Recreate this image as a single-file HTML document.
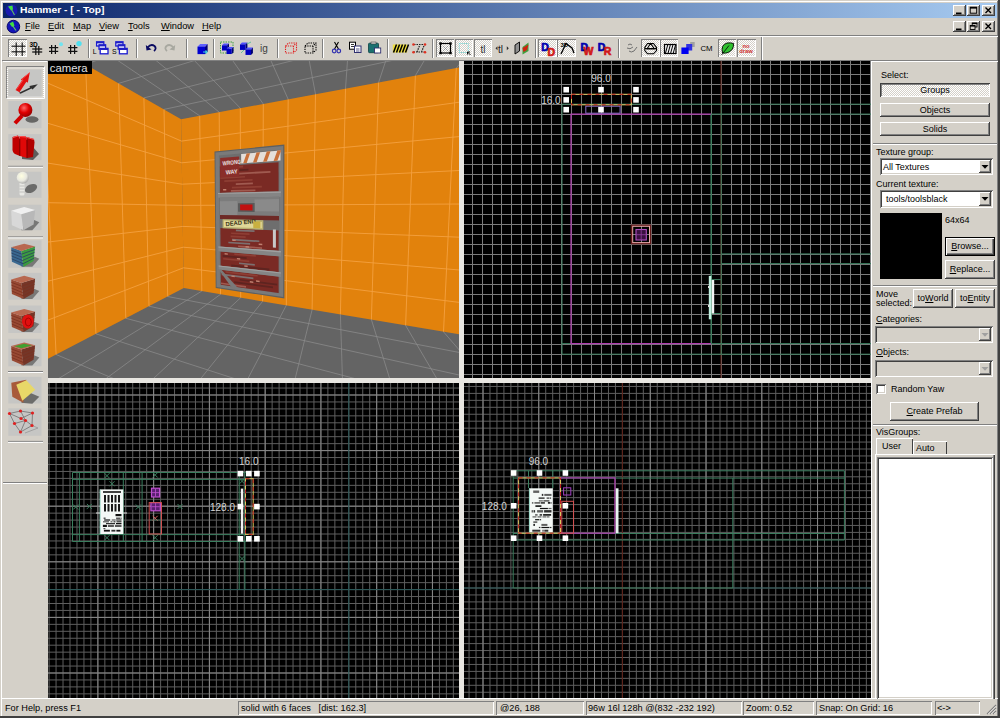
<!DOCTYPE html>
<html><head><meta charset="utf-8"><style>
html,body{margin:0;padding:0;}
body{width:1000px;height:718px;overflow:hidden;position:relative;background:#d4d0c8;font-family:"Liberation Sans",sans-serif;}
.t{position:absolute;white-space:pre;line-height:1;font-family:"Liberation Sans",sans-serif;}
svg{position:absolute;}
u{text-decoration:underline;text-underline-offset:1px;text-decoration-thickness:1px;}
</style></head><body>
<div style="position:absolute;left:0px;top:0px;width:1000px;height:718px;background:#d4d0c8;"></div><div style="position:absolute;left:1px;top:1px;width:998px;height:1px;background:#fff;"></div><div style="position:absolute;left:1px;top:1px;width:1px;height:716px;background:#fff;"></div><div style="position:absolute;left:998px;top:0px;width:2px;height:718px;background:#404040;"></div><div style="position:absolute;left:997px;top:1px;width:1px;height:716px;background:#808080;"></div><div style="position:absolute;left:0px;top:716px;width:1000px;height:2px;background:#404040;"></div><div style="position:absolute;left:3px;top:3px;width:994px;height:15px;background:linear-gradient(to right,#0a246a,#a6caf0);"></div><div class="t" style="left:20px;top:6.2px;font-size:8.8px;color:#fff;font-weight:bold;transform:scaleX(1.17);transform-origin:0 0;">Hammer - [ - Top]</div><div style="position:absolute;left:953px;top:5px;width:13px;height:11px;background:#d4d0c8;box-shadow: inset -1px -1px #404040, inset 1px 1px #fff, inset -2px -2px #808080;"></div><div style="position:absolute;left:967px;top:5px;width:13px;height:11px;background:#d4d0c8;box-shadow: inset -1px -1px #404040, inset 1px 1px #fff, inset -2px -2px #808080;"></div><div style="position:absolute;left:982px;top:5px;width:13px;height:11px;background:#d4d0c8;box-shadow: inset -1px -1px #404040, inset 1px 1px #fff, inset -2px -2px #808080;"></div><div class="t" style="left:25px;top:22px;font-size:9.3px;color:#000;font-weight:normal;"><u>F</u>ile</div><div class="t" style="left:48px;top:22px;font-size:9.3px;color:#000;font-weight:normal;"><u>E</u>dit</div><div class="t" style="left:73px;top:22px;font-size:9.3px;color:#000;font-weight:normal;"><u>M</u>ap</div><div class="t" style="left:99px;top:22px;font-size:9.3px;color:#000;font-weight:normal;"><u>V</u>iew</div><div class="t" style="left:128px;top:22px;font-size:9.3px;color:#000;font-weight:normal;"><u>T</u>ools</div><div class="t" style="left:161px;top:22px;font-size:9.3px;color:#000;font-weight:normal;"><u>W</u>indow</div><div class="t" style="left:202px;top:22px;font-size:9.3px;color:#000;font-weight:normal;"><u>H</u>elp</div><div style="position:absolute;left:953px;top:21px;width:13px;height:11px;background:#d4d0c8;box-shadow: inset -1px -1px #404040, inset 1px 1px #fff, inset -2px -2px #808080;"></div><div style="position:absolute;left:967px;top:21px;width:13px;height:11px;background:#d4d0c8;box-shadow: inset -1px -1px #404040, inset 1px 1px #fff, inset -2px -2px #808080;"></div><div style="position:absolute;left:982px;top:21px;width:13px;height:11px;background:#d4d0c8;box-shadow: inset -1px -1px #404040, inset 1px 1px #fff, inset -2px -2px #808080;"></div><div style="position:absolute;left:3px;top:482px;width:44px;height:1px;background:#808080;"></div><div style="position:absolute;left:3px;top:483px;width:44px;height:1px;background:#fff;"></div><div style="position:absolute;left:2px;top:35px;width:996px;height:1px;background:#808080;"></div><div style="position:absolute;left:2px;top:36px;width:996px;height:1px;background:#fff;"></div><div style="position:absolute;left:2px;top:60px;width:996px;height:1px;background:#808080;"></div><div style="position:absolute;left:761px;top:37px;width:1px;height:23px;background:#808080;"></div><div style="position:absolute;left:762px;top:37px;width:1px;height:23px;background:#fff;"></div><div style="position:absolute;left:2px;top:698px;width:996px;height:1px;background:#fff;"></div><div style="position:absolute;left:238px;top:701px;width:256px;height:14px;background:#d4d0c8;box-shadow: inset 1px 1px #808080, inset -1px -1px #fff;"></div><div style="position:absolute;left:496px;top:701px;width:88px;height:14px;background:#d4d0c8;box-shadow: inset 1px 1px #808080, inset -1px -1px #fff;"></div><div style="position:absolute;left:586px;top:701px;width:156px;height:14px;background:#d4d0c8;box-shadow: inset 1px 1px #808080, inset -1px -1px #fff;"></div><div style="position:absolute;left:743px;top:701px;width:71px;height:14px;background:#d4d0c8;box-shadow: inset 1px 1px #808080, inset -1px -1px #fff;"></div><div style="position:absolute;left:816px;top:701px;width:116px;height:14px;background:#d4d0c8;box-shadow: inset 1px 1px #808080, inset -1px -1px #fff;"></div><div style="position:absolute;left:935px;top:701px;width:45px;height:14px;background:#d4d0c8;box-shadow: inset 1px 1px #808080, inset -1px -1px #fff;"></div><div class="t" style="left:5px;top:703.5px;font-size:9.2px;color:#000;font-weight:normal;">For Help, press F1</div><div class="t" style="left:241px;top:703.5px;font-size:9.2px;color:#000;font-weight:normal;">solid with 6 faces   [dist: 162.3]</div><div class="t" style="left:500px;top:703.5px;font-size:9.2px;color:#000;font-weight:normal;">@26, 188</div><div class="t" style="left:588px;top:703.5px;font-size:9.2px;color:#000;font-weight:normal;">96w 16l 128h @(832 -232 192)</div><div class="t" style="left:746px;top:703.5px;font-size:9.2px;color:#000;font-weight:normal;">Zoom: 0.52</div><div class="t" style="left:819px;top:703.5px;font-size:9.2px;color:#000;font-weight:normal;">Snap: On Grid: 16</div><div class="t" style="left:937px;top:703.5px;font-size:9.2px;color:#000;font-weight:normal;">&lt;-&gt;</div><div style="position:absolute;left:3px;top:61px;width:44px;height:1px;background:#fff;"></div><div style="position:absolute;left:48px;top:61px;width:411px;height:317px;background:#000;"></div><div style="position:absolute;left:464px;top:61px;width:407px;height:317px;background:#000;"></div><div style="position:absolute;left:48px;top:383px;width:411px;height:315px;background:#000;"></div><div style="position:absolute;left:464px;top:383px;width:407px;height:315px;background:#000;"></div><div style="position:absolute;left:459px;top:61px;width:5px;height:637px;background:#e8e6e1;"></div><div style="position:absolute;left:48px;top:378px;width:823px;height:5px;background:#e8e6e1;"></div><div style="position:absolute;left:871px;top:61px;width:127px;height:637px;box-shadow: inset 1px 1px #fff;"></div><div class="t" style="left:881px;top:71px;font-size:9px;color:#000;font-weight:normal;">Select:</div><div style="position:absolute;left:880px;top:83px;width:110px;height:14px;background:repeating-conic-gradient(#fff 0 25%, #d4d0c8 0 50%) 0 0/2px 2px;box-shadow: inset 1px 1px #404040, inset -1px -1px #fff, inset 2px 2px #808080;"></div><div class="t" style="left:880px;top:85.5px;font-size:9px;color:#000;font-weight:normal;width:110px;text-align:center;">Groups</div><div style="position:absolute;left:880px;top:103px;width:110px;height:14px;background:#d4d0c8;box-shadow: inset -1px -1px #404040, inset 1px 1px #fff, inset -2px -2px #808080;"></div><div class="t" style="left:880px;top:105.5px;font-size:9px;color:#000;font-weight:normal;width:110px;text-align:center;">Objects</div><div style="position:absolute;left:880px;top:122px;width:110px;height:14px;background:#d4d0c8;box-shadow: inset -1px -1px #404040, inset 1px 1px #fff, inset -2px -2px #808080;"></div><div class="t" style="left:880px;top:124.5px;font-size:9px;color:#000;font-weight:normal;width:110px;text-align:center;">Solids</div><div style="position:absolute;left:873px;top:143px;width:124px;height:1px;background:#808080;"></div><div style="position:absolute;left:873px;top:144px;width:124px;height:1px;background:#fff;"></div><div style="position:absolute;left:873px;top:285px;width:124px;height:1px;background:#808080;"></div><div style="position:absolute;left:873px;top:286px;width:124px;height:1px;background:#fff;"></div><div style="position:absolute;left:873px;top:424px;width:124px;height:1px;background:#808080;"></div><div style="position:absolute;left:873px;top:425px;width:124px;height:1px;background:#fff;"></div><div class="t" style="left:876px;top:148px;font-size:9px;color:#000;font-weight:normal;">Texture group:</div><div style="position:absolute;left:880px;top:158px;width:113px;height:17px;background:#fff;box-shadow: inset 1px 1px #808080, inset -1px -1px #fff, inset 2px 2px #404040, inset -2px -2px #d4d0c8;"></div><div class="t" style="left:883px;top:163px;font-size:9px;color:#000;font-weight:normal;">All Textures</div><div style="position:absolute;left:979px;top:160px;width:12px;height:13px;background:#d4d0c8;box-shadow: inset -1px -1px #404040, inset 1px 1px #fff, inset -2px -2px #808080;"></div><div class="t" style="left:876px;top:180px;font-size:9px;color:#000;font-weight:normal;">Current texture:</div><div style="position:absolute;left:880px;top:190px;width:113px;height:18px;background:#fff;box-shadow: inset 1px 1px #808080, inset -1px -1px #fff, inset 2px 2px #404040, inset -2px -2px #d4d0c8;"></div><div class="t" style="left:886px;top:195px;font-size:9px;color:#000;font-weight:normal;">tools/toolsblack</div><div style="position:absolute;left:979px;top:192px;width:12px;height:14px;background:#d4d0c8;box-shadow: inset -1px -1px #404040, inset 1px 1px #fff, inset -2px -2px #808080;"></div><div style="position:absolute;left:880px;top:213px;width:62px;height:66px;background:#000;"></div><div class="t" style="left:945px;top:216px;font-size:9px;color:#000;font-weight:normal;">64x64</div><div style="position:absolute;left:945px;top:237px;width:50px;height:19px;background:#d4d0c8;box-shadow: inset 1px 1px #000, inset -1px -1px #000, inset 2px 2px #fff, inset -2px -2px #404040, inset -3px -3px #808080;"></div><div class="t" style="left:945px;top:242px;font-size:9px;color:#000;font-weight:normal;width:50px;text-align:center;"><u>B</u>rowse...</div><div style="position:absolute;left:945px;top:260px;width:50px;height:19px;background:#d4d0c8;box-shadow: inset -1px -1px #404040, inset 1px 1px #fff, inset -2px -2px #808080;"></div><div class="t" style="left:945px;top:265px;font-size:9px;color:#000;font-weight:normal;width:50px;text-align:center;"><u>R</u>eplace...</div><div class="t" style="left:876px;top:290px;font-size:9px;color:#000;font-weight:normal;">Move</div><div class="t" style="left:876px;top:299px;font-size:9px;color:#000;font-weight:normal;">selected:</div><div style="position:absolute;left:913px;top:289px;width:40px;height:19px;background:#d4d0c8;box-shadow: inset -1px -1px #404040, inset 1px 1px #fff, inset -2px -2px #808080;"></div><div class="t" style="left:913px;top:294px;font-size:9px;color:#000;font-weight:normal;width:40px;text-align:center;">to<u>W</u>orld</div><div style="position:absolute;left:955px;top:289px;width:40px;height:19px;background:#d4d0c8;box-shadow: inset -1px -1px #404040, inset 1px 1px #fff, inset -2px -2px #808080;"></div><div class="t" style="left:955px;top:294px;font-size:9px;color:#000;font-weight:normal;width:40px;text-align:center;">to<u>E</u>ntity</div><div class="t" style="left:876px;top:315px;font-size:9px;color:#000;font-weight:normal;"><u>C</u>ategories:</div><div style="position:absolute;left:875px;top:326px;width:118px;height:17px;background:#d4d0c8;box-shadow: inset 1px 1px #808080, inset -1px -1px #fff, inset 2px 2px #404040, inset -2px -2px #d4d0c8;"></div><div style="position:absolute;left:979px;top:328px;width:12px;height:13px;background:#d4d0c8;box-shadow: inset -1px -1px #404040, inset 1px 1px #fff, inset -2px -2px #808080;"></div><div class="t" style="left:876px;top:348px;font-size:9px;color:#000;font-weight:normal;"><u>O</u>bjects:</div><div style="position:absolute;left:875px;top:360px;width:118px;height:17px;background:#d4d0c8;box-shadow: inset 1px 1px #808080, inset -1px -1px #fff, inset 2px 2px #404040, inset -2px -2px #d4d0c8;"></div><div style="position:absolute;left:979px;top:362px;width:12px;height:13px;background:#d4d0c8;box-shadow: inset -1px -1px #404040, inset 1px 1px #fff, inset -2px -2px #808080;"></div><div style="position:absolute;left:876px;top:384px;width:10px;height:10px;background:#fff;box-shadow: inset 1px 1px #808080, inset -1px -1px #fff, inset 2px 2px #404040, inset -2px -2px #d4d0c8;"></div><div class="t" style="left:891px;top:385px;font-size:9px;color:#000;font-weight:normal;">Random Yaw</div><div style="position:absolute;left:890px;top:402px;width:89px;height:19px;background:#d4d0c8;box-shadow: inset -1px -1px #404040, inset 1px 1px #fff, inset -2px -2px #808080;"></div><div class="t" style="left:890px;top:407px;font-size:9px;color:#000;font-weight:normal;width:89px;text-align:center;"><u>C</u>reate Prefab</div><div class="t" style="left:876px;top:428px;font-size:9px;color:#000;font-weight:normal;">VisGroups:</div><div style="position:absolute;left:876px;top:438px;width:37px;height:17px;background:#d4d0c8;box-shadow: inset 1px 1px #fff, inset -1px 0 #404040;"></div><div class="t" style="left:882px;top:442px;font-size:9px;color:#000;font-weight:normal;">User</div><div style="position:absolute;left:913px;top:441px;width:34px;height:14px;background:#d4d0c8;box-shadow: inset 1px 1px #fff, inset -1px 0 #404040;"></div><div class="t" style="left:916px;top:444px;font-size:9px;color:#000;font-weight:normal;">Auto</div><div style="position:absolute;left:875px;top:454px;width:120px;height:245px;box-shadow: inset 1px 1px #fff, inset -1px 0 #404040, inset -2px 0 #808080;"></div><div style="position:absolute;left:877px;top:457px;width:116px;height:242px;background:#fff;box-shadow: inset 1px 1px #808080, inset -1px -1px #fff, inset 2px 2px #404040, inset -2px -2px #d4d0c8;"></div><svg style="left:0px;top:0px" width="1000" height="36" viewBox="0 0 1000 36"><rect x="956" y="12.5" width="5.5" height="1.8" fill="#000"/><rect x="970.2" y="7.2" width="6.5" height="6" fill="none" stroke="#000" stroke-width="1"/><rect x="970" y="7" width="7" height="1.6" fill="#000"/><path d="M985.5,7.5 L991,13 M991,7.5 L985.5,13" stroke="#000" stroke-width="1.4"/><rect x="956" y="28.5" width="5.5" height="1.8" fill="#000"/><rect x="972.2" y="23" width="4.8" height="4" fill="none" stroke="#000" stroke-width="0.9"/><rect x="972" y="22.8" width="5.2" height="1.3" fill="#000"/><rect x="970.2" y="25.5" width="4.8" height="4" fill="#d4d0c8" stroke="#000" stroke-width="0.9"/><rect x="970" y="25.3" width="5.2" height="1.3" fill="#000"/><path d="M985.5,23.5 L991,29 M991,23.5 L985.5,29" stroke="#000" stroke-width="1.4"/><circle cx="11.5" cy="10.5" r="6" fill="#1a1ab0"/><path d="M8,6.5 L12.5,5.5 L13,9.5 L11,10.5 Z" fill="#40e040"/><path d="M11.5,9.5 L14.5,15" stroke="#60c060" stroke-width="1.1"/><circle cx="13.4" cy="26.6" r="6.3" fill="#1414b8" stroke="#000060" stroke-width="0.9"/><path d="M9.5,23.5 L13,21.5 L14.5,25.5 L12,27 Z" fill="#40e040"/><path d="M12.5,25.5 L16,30.5" stroke="#60d060" stroke-width="1.1"/></svg><svg style="left:980px;top:700px" width="20" height="18" viewBox="980 700 20 18"><path d="M996,705 L987,714" stroke="#808080" stroke-width="1.1"/><path d="M996,706.2 L988.2,714" stroke="#fff" stroke-width="0.6"/><path d="M996,708 L990,714" stroke="#808080" stroke-width="1.1"/><path d="M996,709.2 L991.2,714" stroke="#fff" stroke-width="0.6"/><path d="M996,711 L993,714" stroke="#808080" stroke-width="1.1"/><path d="M996,712.2 L994.2,714" stroke="#fff" stroke-width="0.6"/></svg><svg style="left:960px;top:150px" width="40" height="240" viewBox="960 150 40 240"><path d="M981.5,165 L988.5,165 L985,168.8 Z" fill="#000"/><path d="M981.5,197 L988.5,197 L985,200.8 Z" fill="#000"/><path d="M981.5,333 L988.5,333 L985,336.8 Z" fill="#a0a0a0"/><path d="M981.5,367 L988.5,367 L985,370.8 Z" fill="#a0a0a0"/></svg><svg style="left:48px;top:61px" width="411" height="317" viewBox="48 61 411 317"><rect x="48" y="61" width="411" height="317" fill="#646464"/><polygon points="181.1,119.2 94216.0,-17387.0 -30641.1,-17533.9" fill="#646464" /><polygon points="183.8,288.1 98714.4,16840.8 -31373.0,16687.8" fill="#646464" /><polygon points="183.8,288.1 98714.4,16840.8 94216.0,-17387.0 181.1,119.2" fill="#e2820c" /><polygon points="183.8,288.1 -31373.0,16687.8 -30641.1,-17533.9 181.1,119.2" fill="#e2820c" /><line x1="201.8" y1="291.1" x2="199.7" y2="115.8" stroke="#f4a040" stroke-width="0.9"/><line x1="220.5" y1="294.3" x2="219.2" y2="112.2" stroke="#f4a040" stroke-width="0.9"/><line x1="240.7" y1="297.7" x2="240.3" y2="108.2" stroke="#f4a040" stroke-width="0.9"/><line x1="262.6" y1="301.4" x2="263.3" y2="104.0" stroke="#f4a040" stroke-width="0.9"/><line x1="286.3" y1="305.3" x2="288.2" y2="99.3" stroke="#f4a040" stroke-width="0.9"/><line x1="312.1" y1="309.7" x2="315.5" y2="94.2" stroke="#f4a040" stroke-width="0.9"/><line x1="340.4" y1="314.4" x2="345.5" y2="88.6" stroke="#f4a040" stroke-width="0.9"/><line x1="371.4" y1="319.6" x2="378.6" y2="82.5" stroke="#f4a040" stroke-width="0.9"/><line x1="405.6" y1="325.4" x2="415.4" y2="75.6" stroke="#f4a040" stroke-width="0.9"/><line x1="443.5" y1="331.8" x2="456.3" y2="68.0" stroke="#f4a040" stroke-width="0.9"/><line x1="485.7" y1="338.8" x2="502.3" y2="59.5" stroke="#f4a040" stroke-width="0.9"/><line x1="533.1" y1="346.8" x2="554.2" y2="49.8" stroke="#f4a040" stroke-width="0.9"/><line x1="586.6" y1="355.8" x2="613.4" y2="38.8" stroke="#f4a040" stroke-width="0.9"/><line x1="647.4" y1="366.0" x2="681.5" y2="26.1" stroke="#f4a040" stroke-width="0.9"/><line x1="717.3" y1="377.8" x2="760.7" y2="11.4" stroke="#f4a040" stroke-width="0.9"/><line x1="798.4" y1="391.4" x2="853.8" y2="-6.0" stroke="#f4a040" stroke-width="0.9"/><line x1="893.7" y1="407.4" x2="964.9" y2="-26.7" stroke="#f4a040" stroke-width="0.9"/><line x1="1007.1" y1="426.4" x2="1099.8" y2="-51.8" stroke="#f4a040" stroke-width="0.9"/><line x1="1144.5" y1="449.5" x2="1267.1" y2="-82.9" stroke="#f4a040" stroke-width="0.9"/><line x1="1314.3" y1="478.0" x2="1480.0" y2="-122.6" stroke="#f4a040" stroke-width="0.9"/><line x1="1529.5" y1="514.2" x2="1760.2" y2="-174.7" stroke="#f4a040" stroke-width="0.9"/><line x1="1811.3" y1="561.5" x2="2145.4" y2="-246.4" stroke="#f4a040" stroke-width="0.9"/><line x1="2195.9" y1="626.2" x2="2708.4" y2="-351.3" stroke="#f4a040" stroke-width="0.9"/><line x1="2752.6" y1="719.7" x2="3609.2" y2="-519.0" stroke="#f4a040" stroke-width="0.9"/><line x1="3629.7" y1="867.0" x2="5282.0" y2="-830.4" stroke="#f4a040" stroke-width="0.9"/><line x1="5215.8" y1="1133.5" x2="9463.7" y2="-1608.9" stroke="#f4a040" stroke-width="0.9"/><line x1="8953.9" y1="1761.5" x2="38716.9" y2="-7054.9" stroke="#f4a040" stroke-width="0.9"/><line x1="28462.8" y1="5038.9" x2="97387.7" y2="6745.9" stroke="#f4a040" stroke-width="0.9"/><line x1="181.5" y1="141.1" x2="94778.3" y2="-13108.5" stroke="#f4a040" stroke-width="0.9"/><line x1="181.5" y1="141.1" x2="-30732.6" y2="-13256.2" stroke="#f4a040" stroke-width="0.9"/><line x1="181.8" y1="162.8" x2="95340.6" y2="-8830.1" stroke="#f4a040" stroke-width="0.9"/><line x1="181.8" y1="162.8" x2="-30824.1" y2="-8978.5" stroke="#f4a040" stroke-width="0.9"/><line x1="182.2" y1="184.2" x2="95902.9" y2="-4551.6" stroke="#f4a040" stroke-width="0.9"/><line x1="182.2" y1="184.2" x2="-30915.6" y2="-4700.8" stroke="#f4a040" stroke-width="0.9"/><line x1="182.5" y1="205.4" x2="96465.2" y2="-273.1" stroke="#f4a040" stroke-width="0.9"/><line x1="182.5" y1="205.4" x2="-31007.0" y2="-423.1" stroke="#f4a040" stroke-width="0.9"/><line x1="182.8" y1="226.4" x2="97027.5" y2="4005.4" stroke="#f4a040" stroke-width="0.9"/><line x1="182.8" y1="226.4" x2="-31098.5" y2="3854.6" stroke="#f4a040" stroke-width="0.9"/><line x1="183.2" y1="247.2" x2="97589.8" y2="8283.8" stroke="#f4a040" stroke-width="0.9"/><line x1="183.2" y1="247.2" x2="-31190.0" y2="8132.3" stroke="#f4a040" stroke-width="0.9"/><line x1="183.5" y1="267.8" x2="98152.1" y2="12562.3" stroke="#f4a040" stroke-width="0.9"/><line x1="183.5" y1="267.8" x2="-31281.5" y2="12410.1" stroke="#f4a040" stroke-width="0.9"/><line x1="167.7" y1="296.5" x2="164.0" y2="109.4" stroke="#f4a040" stroke-width="0.9"/><line x1="149.0" y1="306.2" x2="143.9" y2="97.9" stroke="#f4a040" stroke-width="0.9"/><line x1="125.8" y1="318.3" x2="118.6" y2="83.4" stroke="#f4a040" stroke-width="0.9"/><line x1="95.9" y1="333.8" x2="85.6" y2="64.5" stroke="#f4a040" stroke-width="0.9"/><line x1="56.1" y1="354.5" x2="40.9" y2="38.9" stroke="#f4a040" stroke-width="0.9"/><line x1="0.7" y1="383.3" x2="-23.2" y2="2.2" stroke="#f4a040" stroke-width="0.9"/><line x1="-82.0" y1="426.3" x2="-122.6" y2="-54.7" stroke="#f4a040" stroke-width="0.9"/><line x1="-218.6" y1="497.3" x2="-297.9" y2="-155.1" stroke="#f4a040" stroke-width="0.9"/><line x1="-487.3" y1="636.9" x2="-689.3" y2="-379.3" stroke="#f4a040" stroke-width="0.9"/><line x1="-1259.5" y1="1038.2" x2="-2338.2" y2="-1323.7" stroke="#f4a040" stroke-width="0.9"/><line x1="-24895.4" y1="13321.5" x2="-31350.3" y2="15627.1" stroke="#f4a040" stroke-width="0.9"/><line x1="199.7" y1="115.8" x2="-25918.3" y2="-17528.3" stroke="#8c8c8c" stroke-width="0.75"/><line x1="201.8" y1="291.1" x2="-26650.1" y2="16693.3" stroke="#8c8c8c" stroke-width="0.75"/><line x1="219.2" y1="112.2" x2="-21332.3" y2="-17522.9" stroke="#8c8c8c" stroke-width="0.75"/><line x1="220.5" y1="294.3" x2="-22064.1" y2="16698.7" stroke="#8c8c8c" stroke-width="0.75"/><line x1="240.3" y1="108.2" x2="-16746.3" y2="-17517.5" stroke="#8c8c8c" stroke-width="0.75"/><line x1="240.7" y1="297.7" x2="-17478.1" y2="16704.1" stroke="#8c8c8c" stroke-width="0.75"/><line x1="263.3" y1="104.0" x2="-12160.3" y2="-17512.1" stroke="#8c8c8c" stroke-width="0.75"/><line x1="262.6" y1="301.4" x2="-12892.1" y2="16709.5" stroke="#8c8c8c" stroke-width="0.75"/><line x1="288.2" y1="99.3" x2="-7574.3" y2="-17506.7" stroke="#8c8c8c" stroke-width="0.75"/><line x1="286.3" y1="305.3" x2="-8306.1" y2="16714.9" stroke="#8c8c8c" stroke-width="0.75"/><line x1="315.5" y1="94.2" x2="-2988.3" y2="-17501.4" stroke="#8c8c8c" stroke-width="0.75"/><line x1="312.1" y1="309.7" x2="-3720.1" y2="16720.3" stroke="#8c8c8c" stroke-width="0.75"/><line x1="345.5" y1="88.6" x2="1597.7" y2="-17496.0" stroke="#8c8c8c" stroke-width="0.75"/><line x1="340.4" y1="314.4" x2="865.9" y2="16725.7" stroke="#8c8c8c" stroke-width="0.75"/><line x1="378.6" y1="82.5" x2="6183.7" y2="-17490.6" stroke="#8c8c8c" stroke-width="0.75"/><line x1="371.4" y1="319.6" x2="5451.9" y2="16731.1" stroke="#8c8c8c" stroke-width="0.75"/><line x1="415.4" y1="75.6" x2="10769.7" y2="-17485.2" stroke="#8c8c8c" stroke-width="0.75"/><line x1="405.6" y1="325.4" x2="10037.9" y2="16736.5" stroke="#8c8c8c" stroke-width="0.75"/><line x1="456.3" y1="68.0" x2="15355.7" y2="-17479.8" stroke="#8c8c8c" stroke-width="0.75"/><line x1="443.5" y1="331.8" x2="14623.9" y2="16741.9" stroke="#8c8c8c" stroke-width="0.75"/><line x1="502.3" y1="59.5" x2="19941.7" y2="-17474.4" stroke="#8c8c8c" stroke-width="0.75"/><line x1="485.7" y1="338.8" x2="19209.9" y2="16747.3" stroke="#8c8c8c" stroke-width="0.75"/><line x1="554.2" y1="49.8" x2="24527.7" y2="-17469.0" stroke="#8c8c8c" stroke-width="0.75"/><line x1="533.1" y1="346.8" x2="23795.9" y2="16752.7" stroke="#8c8c8c" stroke-width="0.75"/><line x1="613.4" y1="38.8" x2="29113.7" y2="-17463.6" stroke="#8c8c8c" stroke-width="0.75"/><line x1="586.6" y1="355.8" x2="28381.9" y2="16758.1" stroke="#8c8c8c" stroke-width="0.75"/><line x1="681.5" y1="26.1" x2="33699.7" y2="-17458.2" stroke="#8c8c8c" stroke-width="0.75"/><line x1="647.4" y1="366.0" x2="32967.9" y2="16763.5" stroke="#8c8c8c" stroke-width="0.75"/><line x1="760.7" y1="11.4" x2="38285.7" y2="-17452.8" stroke="#8c8c8c" stroke-width="0.75"/><line x1="717.3" y1="377.8" x2="37553.9" y2="16768.8" stroke="#8c8c8c" stroke-width="0.75"/><line x1="853.8" y1="-6.0" x2="42871.7" y2="-17447.4" stroke="#8c8c8c" stroke-width="0.75"/><line x1="798.4" y1="391.4" x2="42139.9" y2="16774.2" stroke="#8c8c8c" stroke-width="0.75"/><line x1="964.9" y1="-26.7" x2="47457.7" y2="-17442.0" stroke="#8c8c8c" stroke-width="0.75"/><line x1="893.7" y1="407.4" x2="46725.9" y2="16779.6" stroke="#8c8c8c" stroke-width="0.75"/><line x1="1099.8" y1="-51.8" x2="52043.7" y2="-17436.6" stroke="#8c8c8c" stroke-width="0.75"/><line x1="1007.1" y1="426.4" x2="51311.9" y2="16785.0" stroke="#8c8c8c" stroke-width="0.75"/><line x1="1267.1" y1="-82.9" x2="56629.7" y2="-17431.2" stroke="#8c8c8c" stroke-width="0.75"/><line x1="1144.5" y1="449.5" x2="55897.9" y2="16790.4" stroke="#8c8c8c" stroke-width="0.75"/><line x1="1480.0" y1="-122.6" x2="61215.7" y2="-17425.8" stroke="#8c8c8c" stroke-width="0.75"/><line x1="1314.3" y1="478.0" x2="60483.9" y2="16795.8" stroke="#8c8c8c" stroke-width="0.75"/><line x1="1760.2" y1="-174.7" x2="65801.7" y2="-17420.4" stroke="#8c8c8c" stroke-width="0.75"/><line x1="1529.5" y1="514.2" x2="65069.9" y2="16801.2" stroke="#8c8c8c" stroke-width="0.75"/><line x1="2145.4" y1="-246.4" x2="70387.7" y2="-17415.0" stroke="#8c8c8c" stroke-width="0.75"/><line x1="1811.3" y1="561.5" x2="69655.8" y2="16806.6" stroke="#8c8c8c" stroke-width="0.75"/><line x1="2708.4" y1="-351.3" x2="74973.7" y2="-17409.6" stroke="#8c8c8c" stroke-width="0.75"/><line x1="2195.9" y1="626.2" x2="74241.8" y2="16812.0" stroke="#8c8c8c" stroke-width="0.75"/><line x1="3609.2" y1="-519.0" x2="79559.7" y2="-17404.2" stroke="#8c8c8c" stroke-width="0.75"/><line x1="2752.6" y1="719.7" x2="78827.8" y2="16817.4" stroke="#8c8c8c" stroke-width="0.75"/><line x1="5282.0" y1="-830.4" x2="84145.7" y2="-17398.9" stroke="#8c8c8c" stroke-width="0.75"/><line x1="3629.7" y1="867.0" x2="83413.8" y2="16822.8" stroke="#8c8c8c" stroke-width="0.75"/><line x1="9463.7" y1="-1608.9" x2="88731.6" y2="-17393.5" stroke="#8c8c8c" stroke-width="0.75"/><line x1="5215.8" y1="1133.5" x2="87999.8" y2="16828.2" stroke="#8c8c8c" stroke-width="0.75"/><line x1="38716.9" y1="-7054.9" x2="93317.6" y2="-17388.1" stroke="#8c8c8c" stroke-width="0.75"/><line x1="8953.9" y1="1761.5" x2="92585.8" y2="16833.6" stroke="#8c8c8c" stroke-width="0.75"/><line x1="28462.8" y1="5038.9" x2="97171.8" y2="16839.0" stroke="#8c8c8c" stroke-width="0.75"/><line x1="164.0" y1="109.4" x2="81777.4" y2="-17401.6" stroke="#8c8c8c" stroke-width="0.75"/><line x1="167.7" y1="296.5" x2="86275.8" y2="16826.2" stroke="#8c8c8c" stroke-width="0.75"/><line x1="143.9" y1="97.9" x2="70028.7" y2="-17415.5" stroke="#8c8c8c" stroke-width="0.75"/><line x1="149.0" y1="306.2" x2="74527.2" y2="16812.3" stroke="#8c8c8c" stroke-width="0.75"/><line x1="118.6" y1="83.4" x2="58280.1" y2="-17429.3" stroke="#8c8c8c" stroke-width="0.75"/><line x1="125.8" y1="318.3" x2="62778.5" y2="16798.5" stroke="#8c8c8c" stroke-width="0.75"/><line x1="85.6" y1="64.5" x2="46531.4" y2="-17443.1" stroke="#8c8c8c" stroke-width="0.75"/><line x1="95.9" y1="333.8" x2="51029.8" y2="16784.7" stroke="#8c8c8c" stroke-width="0.75"/><line x1="40.9" y1="38.9" x2="34782.7" y2="-17456.9" stroke="#8c8c8c" stroke-width="0.75"/><line x1="56.1" y1="354.5" x2="39281.2" y2="16770.9" stroke="#8c8c8c" stroke-width="0.75"/><line x1="-23.2" y1="2.2" x2="23034.1" y2="-17470.7" stroke="#8c8c8c" stroke-width="0.75"/><line x1="0.7" y1="383.3" x2="27532.5" y2="16757.1" stroke="#8c8c8c" stroke-width="0.75"/><line x1="-122.6" y1="-54.7" x2="11285.4" y2="-17484.6" stroke="#8c8c8c" stroke-width="0.75"/><line x1="-82.0" y1="426.3" x2="15783.8" y2="16743.2" stroke="#8c8c8c" stroke-width="0.75"/><line x1="-297.9" y1="-155.1" x2="-463.3" y2="-17498.4" stroke="#8c8c8c" stroke-width="0.75"/><line x1="-218.6" y1="497.3" x2="4035.2" y2="16729.4" stroke="#8c8c8c" stroke-width="0.75"/><line x1="-689.3" y1="-379.3" x2="-12212.0" y2="-17512.2" stroke="#8c8c8c" stroke-width="0.75"/><line x1="-487.3" y1="636.9" x2="-7713.5" y2="16715.6" stroke="#8c8c8c" stroke-width="0.75"/><line x1="-2338.2" y1="-1323.7" x2="-23960.6" y2="-17526.0" stroke="#8c8c8c" stroke-width="0.75"/><line x1="-1259.5" y1="1038.2" x2="-19462.2" y2="16701.8" stroke="#8c8c8c" stroke-width="0.75"/><line x1="-24895.4" y1="13321.5" x2="-31210.8" y2="16688.0" stroke="#8c8c8c" stroke-width="0.75"/><polygon points="214.5,151.6 284.4,144.5 284.4,298.5 215.7,288.0" fill="#5e6062" /><polygon points="215.4,152.6 283.2,145.9 283.2,297.1 216.6,287.1" fill="#7a7a7a" /><polygon points="218.9,155.4 279.3,149.7 279.4,293.2 220.0,284.6" fill="#6e6e6e" /><polygon points="219.9,166.4 278.5,162.2 278.6,191.5 220.1,192.9" fill="#7a2a24" /><polygon points="225.8,166.9 243.1,165.6 243.1,167.4 225.8,168.5" fill="#8e3e34" /><polygon points="221.0,170.5 248.5,168.7 248.5,170.5 221.0,172.2" fill="#5e2420" /><polygon points="230.9,173.2 270.4,170.9 270.5,172.7 230.9,175.0" fill="#a05a50" /><polygon points="220.4,177.2 245.0,175.9 245.0,177.6 220.4,178.9" fill="#8e3e34" /><polygon points="224.3,180.3 252.5,179.0 252.5,180.7 224.3,182.0" fill="#8e3e34" /><polygon points="235.8,183.2 252.9,182.5 252.9,184.2 235.8,184.9" fill="#a05a50" /><polygon points="231.9,186.7 261.9,185.7 261.9,187.5 231.9,188.4" fill="#8e3e34" /><polygon points="230.9,190.1 255.4,189.4 255.4,191.2 230.9,191.8" fill="#a05a50" /><polygon points="223.1,189.1 226.3,189.0 226.3,190.4 223.1,190.5" fill="#c08070" /><polygon points="234.0,169.3 237.4,169.1 237.4,170.6 234.0,170.8" fill="#c08070" /><polygon points="226.2,174.3 229.4,174.1 229.4,175.5 226.2,175.7" fill="#c08070" /><polygon points="220.4,228.1 278.6,230.5 278.6,251.0 220.6,246.6" fill="#7a2a24" /><polygon points="235.9,229.5 254.5,230.3 254.5,232.0 235.9,231.2" fill="#7c7070" /><polygon points="231.1,232.4 249.5,233.3 249.5,235.0 231.1,234.1" fill="#8e3e34" /><polygon points="230.6,235.5 245.6,236.3 245.6,238.1 230.6,237.2" fill="#8e3e34" /><polygon points="232.0,238.8 259.3,240.4 259.3,242.1 232.1,240.5" fill="#7c7070" /><polygon points="228.3,241.7 250.1,243.1 250.1,244.8 228.4,243.3" fill="#7c7070" /><polygon points="238.1,245.5 262.0,247.2 262.0,248.9 238.1,247.2" fill="#a05a50" /><polygon points="258.7,243.5 262.3,243.8 262.3,245.2 258.7,245.0" fill="#c08070" /><polygon points="232.4,239.5 235.7,239.7 235.7,241.1 232.4,240.9" fill="#c08070" /><polygon points="245.5,246.1 249.0,246.3 249.0,247.8 245.6,247.5" fill="#c08070" /><polygon points="220.6,251.4 278.6,256.3 278.6,272.1 220.7,265.7" fill="#7a2a24" /><polygon points="234.3,253.2 255.8,255.0 255.8,256.7 234.3,254.9" fill="#8e3e34" /><polygon points="222.6,255.1 246.6,257.2 246.6,258.9 222.6,256.7" fill="#5e2420" /><polygon points="223.2,258.0 249.3,260.5 249.3,262.2 223.2,259.6" fill="#8e3e34" /><polygon points="239.0,262.5 254.8,264.0 254.8,265.8 239.0,264.1" fill="#7c7070" /><polygon points="231.3,264.6 269.4,268.6 269.4,270.4 231.3,266.3" fill="#5e2420" /><polygon points="236.9,257.9 240.2,258.2 240.2,259.7 236.9,259.3" fill="#c08070" /><polygon points="244.3,265.3 247.7,265.6 247.7,267.1 244.3,266.7" fill="#c08070" /><polygon points="224.6,253.1 227.8,253.4 227.8,254.7 224.6,254.5" fill="#c08070" /><polygon points="220.8,269.8 278.6,276.6 278.6,293.1 220.9,284.7" fill="#7a2a24" /><polygon points="225.5,271.1 257.6,274.9 257.7,276.6 225.6,272.7" fill="#8e3e34" /><polygon points="221.6,273.6 253.4,277.5 253.4,279.3 221.6,275.2" fill="#7c7070" /><polygon points="239.7,278.9 277.2,283.8 277.2,285.6 239.7,280.6" fill="#5e2420" /><polygon points="234.2,281.3 273.0,286.5 273.0,288.3 234.2,282.9" fill="#5e2420" /><polygon points="221.0,282.4 246.0,286.0 246.0,287.7 221.0,284.1" fill="#a05a50" /><polygon points="249.8,281.0 253.3,281.4 253.3,282.9 249.8,282.4" fill="#c08070" /><polygon points="231.4,275.4 234.7,275.8 234.7,277.2 231.5,276.8" fill="#c08070" /><polygon points="256.0,280.3 259.6,280.7 259.6,282.2 256.1,281.7" fill="#c08070" /><polygon points="218.0,192.9 280.9,191.4 280.9,196.8 218.0,197.8" fill="#858585" /><polygon points="218.0,192.9 280.9,191.4 280.9,192.7 218.0,194.0" fill="#a0a0a0" /><polygon points="218.4,246.5 280.9,251.1 280.9,256.5 218.4,251.2" fill="#858585" /><polygon points="218.4,246.5 280.9,251.1 280.9,252.4 218.4,247.5" fill="#a0a0a0" /><polygon points="218.6,265.5 280.9,272.4 280.9,276.9 218.6,269.5" fill="#858585" /><polygon points="218.6,265.5 280.9,272.4 280.9,273.6 218.6,266.6" fill="#a0a0a0" /><polygon points="219.9,197.7 279.0,196.8 279.0,220.6 220.0,219.1" fill="#7c7c7c" /><polygon points="219.9,201.2 237.4,201.1 237.4,215.3 220.0,215.0" fill="#8a8a8a" /><polygon points="254.6,199.4 279.0,199.1 279.0,211.4 254.6,211.2" fill="#8a8a8a" /><polygon points="220.0,215.0 279.0,216.0 279.0,220.6 220.0,219.1" fill="#6e2a26" /><polygon points="238.0,203.2 254.6,203.1 254.6,211.9 238.1,211.8" fill="#5a5a5a" /><polygon points="240.1,204.6 252.5,204.6 252.5,210.4 240.1,210.3" fill="#c01010" /><polygon points="220.2,158.0 239.1,156.4 239.2,176.6 220.3,177.6" fill="#8a2e2a" /><g><text x="222.8" y="165.5" font-family="Liberation Sans" font-weight="bold" font-size="6.0" fill="#e8e0e0" textLength="18.4" lengthAdjust="spacingAndGlyphs" transform="rotate(-5.8 222.8 165.5)">WRONG</text><text x="226.0" y="174.5" font-family="Liberation Sans" font-weight="bold" font-size="6.0" fill="#e8e0e0" textLength="11.8" lengthAdjust="spacingAndGlyphs" transform="rotate(-5.8 226.0 174.5)">WAY</text></g><polygon points="241.1,154.0 280.5,150.4 280.5,160.5 241.2,163.4" fill="#e4dfda" /><polygon points="246.6,153.5 250.1,153.2 246.7,163.0 243.2,163.3" fill="#c8703a" /><polygon points="256.5,152.6 260.1,152.2 256.6,162.3 253.0,162.6" fill="#c8703a" /><polygon points="266.8,151.6 270.5,151.3 266.8,161.5 263.1,161.8" fill="#c8703a" /><polygon points="277.4,150.6 281.3,150.3 277.4,160.7 273.6,161.0" fill="#c8703a" /><polygon points="222.6,219.2 263.3,220.2 263.3,229.8 222.6,228.2" fill="#b8b070" /><polygon points="223.8,220.6 261.8,221.6 261.8,228.3 223.9,226.9" fill="#e0d898" /><text x="225.8" y="226.2" font-family="Liberation Sans" font-weight="bold" font-size="6.0" fill="#3a3418" textLength="30.3" lengthAdjust="spacingAndGlyphs" transform="rotate(-5.8 225.8 226.2)">DEAD END</text><polygon points="253.2,221.4 260.4,221.6 260.4,228.3 253.3,228.0" fill="#c8b040" /><polygon points="272.9,229.5 275.9,229.6 275.9,247.8 272.9,247.5" fill="#c8c8c8" /><polygon points="218.6,269.5 221.7,269.9 237.9,287.9 231.3,286.9" fill="#7a7a7a" /><rect x="48" y="61" width="44" height="13" fill="#000"/><text x="49.8" y="72" font-family="Liberation Sans" font-size="11.3" fill="#e0e0e0">camera</text></svg><svg style="left:464px;top:61px" width="407" height="317" viewBox="464 61 407 317"><rect x="464" y="61" width="407" height="317" fill="#000"/><line x1="472.50" y1="61" x2="472.50" y2="378" stroke="#7c7c7c" stroke-width="1.0" /><line x1="482.50" y1="61" x2="482.50" y2="378" stroke="#7c7c7c" stroke-width="1.0" /><line x1="492.50" y1="61" x2="492.50" y2="378" stroke="#7c7c7c" stroke-width="1.0" /><line x1="501.50" y1="61" x2="501.50" y2="378" stroke="#7c7c7c" stroke-width="1.0" /><line x1="511.50" y1="61" x2="511.50" y2="378" stroke="#7c7c7c" stroke-width="1.0" /><line x1="521.50" y1="61" x2="521.50" y2="378" stroke="#7c7c7c" stroke-width="1.0" /><line x1="531.50" y1="61" x2="531.50" y2="378" stroke="#7c7c7c" stroke-width="1.0" /><line x1="541.50" y1="61" x2="541.50" y2="378" stroke="#7c7c7c" stroke-width="1.0" /><line x1="551.50" y1="61" x2="551.50" y2="378" stroke="#7c7c7c" stroke-width="1.0" /><line x1="561.50" y1="61" x2="561.50" y2="378" stroke="#7c7c7c" stroke-width="1.0" /><line x1="571.50" y1="61" x2="571.50" y2="378" stroke="#7c7c7c" stroke-width="1.0" /><line x1="581.50" y1="61" x2="581.50" y2="378" stroke="#7c7c7c" stroke-width="1.0" /><line x1="591.50" y1="61" x2="591.50" y2="378" stroke="#7c7c7c" stroke-width="1.0" /><line x1="601.50" y1="61" x2="601.50" y2="378" stroke="#7c7c7c" stroke-width="1.0" /><line x1="611.50" y1="61" x2="611.50" y2="378" stroke="#7c7c7c" stroke-width="1.0" /><line x1="621.50" y1="61" x2="621.50" y2="378" stroke="#7c7c7c" stroke-width="1.0" /><line x1="631.50" y1="61" x2="631.50" y2="378" stroke="#7c7c7c" stroke-width="1.0" /><line x1="641.50" y1="61" x2="641.50" y2="378" stroke="#7c7c7c" stroke-width="1.0" /><line x1="651.50" y1="61" x2="651.50" y2="378" stroke="#7c7c7c" stroke-width="1.0" /><line x1="661.50" y1="61" x2="661.50" y2="378" stroke="#7c7c7c" stroke-width="1.0" /><line x1="671.50" y1="61" x2="671.50" y2="378" stroke="#7c7c7c" stroke-width="1.0" /><line x1="681.50" y1="61" x2="681.50" y2="378" stroke="#7c7c7c" stroke-width="1.0" /><line x1="691.50" y1="61" x2="691.50" y2="378" stroke="#7c7c7c" stroke-width="1.0" /><line x1="701.50" y1="61" x2="701.50" y2="378" stroke="#7c7c7c" stroke-width="1.0" /><line x1="711.50" y1="61" x2="711.50" y2="378" stroke="#7c7c7c" stroke-width="1.0" /><line x1="721.50" y1="61" x2="721.50" y2="378" stroke="#7c7c7c" stroke-width="1.0" /><line x1="731.50" y1="61" x2="731.50" y2="378" stroke="#7c7c7c" stroke-width="1.0" /><line x1="741.50" y1="61" x2="741.50" y2="378" stroke="#7c7c7c" stroke-width="1.0" /><line x1="750.50" y1="61" x2="750.50" y2="378" stroke="#7c7c7c" stroke-width="1.0" /><line x1="760.50" y1="61" x2="760.50" y2="378" stroke="#7c7c7c" stroke-width="1.0" /><line x1="770.50" y1="61" x2="770.50" y2="378" stroke="#7c7c7c" stroke-width="1.0" /><line x1="780.50" y1="61" x2="780.50" y2="378" stroke="#7c7c7c" stroke-width="1.0" /><line x1="790.50" y1="61" x2="790.50" y2="378" stroke="#7c7c7c" stroke-width="1.0" /><line x1="800.50" y1="61" x2="800.50" y2="378" stroke="#7c7c7c" stroke-width="1.0" /><line x1="810.50" y1="61" x2="810.50" y2="378" stroke="#7c7c7c" stroke-width="1.0" /><line x1="820.50" y1="61" x2="820.50" y2="378" stroke="#7c7c7c" stroke-width="1.0" /><line x1="830.50" y1="61" x2="830.50" y2="378" stroke="#7c7c7c" stroke-width="1.0" /><line x1="840.50" y1="61" x2="840.50" y2="378" stroke="#7c7c7c" stroke-width="1.0" /><line x1="850.50" y1="61" x2="850.50" y2="378" stroke="#7c7c7c" stroke-width="1.0" /><line x1="860.50" y1="61" x2="860.50" y2="378" stroke="#7c7c7c" stroke-width="1.0" /><line x1="870.50" y1="61" x2="870.50" y2="378" stroke="#7c7c7c" stroke-width="1.0" /><line x1="464" y1="64.50" x2="871" y2="64.50" stroke="#7c7c7c" stroke-width="1.0" /><line x1="464" y1="74.50" x2="871" y2="74.50" stroke="#7c7c7c" stroke-width="1.0" /><line x1="464" y1="84.50" x2="871" y2="84.50" stroke="#7c7c7c" stroke-width="1.0" /><line x1="464" y1="94.50" x2="871" y2="94.50" stroke="#7c7c7c" stroke-width="1.0" /><line x1="464" y1="104.50" x2="871" y2="104.50" stroke="#7c7c7c" stroke-width="1.0" /><line x1="464" y1="114.50" x2="871" y2="114.50" stroke="#7c7c7c" stroke-width="1.0" /><line x1="464" y1="124.50" x2="871" y2="124.50" stroke="#7c7c7c" stroke-width="1.0" /><line x1="464" y1="134.50" x2="871" y2="134.50" stroke="#7c7c7c" stroke-width="1.0" /><line x1="464" y1="144.50" x2="871" y2="144.50" stroke="#7c7c7c" stroke-width="1.0" /><line x1="464" y1="154.50" x2="871" y2="154.50" stroke="#7c7c7c" stroke-width="1.0" /><line x1="464" y1="164.50" x2="871" y2="164.50" stroke="#7c7c7c" stroke-width="1.0" /><line x1="464" y1="174.50" x2="871" y2="174.50" stroke="#7c7c7c" stroke-width="1.0" /><line x1="464" y1="184.50" x2="871" y2="184.50" stroke="#7c7c7c" stroke-width="1.0" /><line x1="464" y1="194.50" x2="871" y2="194.50" stroke="#7c7c7c" stroke-width="1.0" /><line x1="464" y1="204.50" x2="871" y2="204.50" stroke="#7c7c7c" stroke-width="1.0" /><line x1="464" y1="214.50" x2="871" y2="214.50" stroke="#7c7c7c" stroke-width="1.0" /><line x1="464" y1="224.50" x2="871" y2="224.50" stroke="#7c7c7c" stroke-width="1.0" /><line x1="464" y1="234.50" x2="871" y2="234.50" stroke="#7c7c7c" stroke-width="1.0" /><line x1="464" y1="244.50" x2="871" y2="244.50" stroke="#7c7c7c" stroke-width="1.0" /><line x1="464" y1="254.50" x2="871" y2="254.50" stroke="#7c7c7c" stroke-width="1.0" /><line x1="464" y1="264.50" x2="871" y2="264.50" stroke="#7c7c7c" stroke-width="1.0" /><line x1="464" y1="274.50" x2="871" y2="274.50" stroke="#7c7c7c" stroke-width="1.0" /><line x1="464" y1="284.50" x2="871" y2="284.50" stroke="#7c7c7c" stroke-width="1.0" /><line x1="464" y1="294.50" x2="871" y2="294.50" stroke="#7c7c7c" stroke-width="1.0" /><line x1="464" y1="304.50" x2="871" y2="304.50" stroke="#7c7c7c" stroke-width="1.0" /><line x1="464" y1="314.50" x2="871" y2="314.50" stroke="#7c7c7c" stroke-width="1.0" /><line x1="464" y1="324.50" x2="871" y2="324.50" stroke="#7c7c7c" stroke-width="1.0" /><line x1="464" y1="334.50" x2="871" y2="334.50" stroke="#7c7c7c" stroke-width="1.0" /><line x1="464" y1="344.50" x2="871" y2="344.50" stroke="#7c7c7c" stroke-width="1.0" /><line x1="464" y1="354.50" x2="871" y2="354.50" stroke="#7c7c7c" stroke-width="1.0" /><line x1="464" y1="364.50" x2="871" y2="364.50" stroke="#7c7c7c" stroke-width="1.0" /><line x1="464" y1="374.50" x2="871" y2="374.50" stroke="#7c7c7c" stroke-width="1.0" /><line x1="721" y1="61" x2="721" y2="378" stroke="#5e2016" stroke-width="1.0" /><line x1="562" y1="104.2" x2="562" y2="354.2" stroke="#3a7e5e" stroke-width="1.0" /><line x1="562" y1="104.2" x2="871" y2="104.2" stroke="#3a7e5e" stroke-width="1.0" /><line x1="562" y1="343.6" x2="871" y2="343.6" stroke="#3a7e5e" stroke-width="1.0" /><line x1="562" y1="354.2" x2="871" y2="354.2" stroke="#3a7e5e" stroke-width="1.0" /><line x1="710.8" y1="114.1" x2="871" y2="114.1" stroke="#3a7e5e" stroke-width="1.0" /><line x1="711.2" y1="114.1" x2="711.2" y2="343.6" stroke="#3a7e5e" stroke-width="1.0" /><line x1="721.2" y1="104.2" x2="721.2" y2="354.2" stroke="#3a7e5e" stroke-width="1.0" /><line x1="721.2" y1="253.9" x2="871" y2="253.9" stroke="#3a7e5e" stroke-width="1.0" /><line x1="721.2" y1="263.6" x2="871" y2="263.6" stroke="#3a7e5e" stroke-width="1.0" /><path d="M711,114.1 L571,114.1 L571,343.6 L711,343.6" fill="none" stroke="#b03cb0" stroke-width="1.2"/><line x1="711.2" y1="114.1" x2="711.2" y2="343.6" stroke="#3a7e5e" stroke-width="1.0" /><rect x="585.8" y="106.2" width="34.30000000000007" height="7.0" stroke="#8c6cc8" stroke-width="1.0" fill="none" /><rect x="571.5" y="94.3" width="59.799999999999955" height="10.5" stroke="#d8c860" stroke-width="1.0" fill="none" /><rect x="571.5" y="94.3" width="59.799999999999955" height="10.5" stroke="#c02020" stroke-width="1.0" fill="none" stroke-dasharray="4 4"/><rect x="563.4000000000001" y="86.9" width="5.599999999999909" height="5.599999999999994" fill="#fff"/><rect x="563.4000000000001" y="97.10000000000001" width="5.599999999999909" height="5.599999999999994" fill="#fff"/><rect x="563.4000000000001" y="106.9" width="5.599999999999909" height="5.599999999999994" fill="#fff"/><rect x="598.2" y="86.9" width="5.599999999999909" height="5.599999999999994" fill="#fff"/><rect x="598.2" y="106.9" width="5.599999999999909" height="5.599999999999994" fill="#fff"/><rect x="633.2" y="86.9" width="5.599999999999909" height="5.599999999999994" fill="#fff"/><rect x="633.2" y="97.10000000000001" width="5.599999999999909" height="5.599999999999994" fill="#fff"/><rect x="633.2" y="106.9" width="5.599999999999909" height="5.599999999999994" fill="#fff"/><text x="601" y="82" font-family="Liberation Sans" font-size="10" fill="#d4d4d4" text-anchor="middle">96.0</text><text x="560.6" y="103.5" font-family="Liberation Sans" font-size="10" fill="#d4d4d4" text-anchor="end">16.0</text><rect x="631.5" y="225.3" width="19.0" height="18.299999999999983" stroke="#601818" stroke-width="1.5" fill="none" /><rect x="632.7" y="226.3" width="16.799999999999955" height="16.299999999999983" stroke="#e8a8a8" stroke-width="1.0" fill="none" /><rect x="636" y="229.5" width="10.299999999999955" height="10.5" stroke="#b050c0" stroke-width="1.1" fill="#3a1040" /><line x1="636" y1="234.7" x2="646.3" y2="234.7" stroke="#9040a0" stroke-width="0.8" /><line x1="641.2" y1="229.5" x2="641.2" y2="240" stroke="#9040a0" stroke-width="0.8" /><line x1="711.7" y1="279.6" x2="720.9" y2="279.6" stroke="#3a7e5e" stroke-width="1.0" /><line x1="711.7" y1="313.5" x2="720.9" y2="313.5" stroke="#3a7e5e" stroke-width="1.0" /><rect x="708.8" y="275.9" width="2.5" height="43.400000000000034" fill="#c0f0e0"/><rect x="711.7" y="280" width="2.5" height="33.5" fill="#f4f4f4"/><rect x="708" y="286" width="1.5" height="2" fill="#e0e0e0"/><rect x="708" y="305" width="1.5" height="2" fill="#e0e0e0"/></svg><svg style="left:48px;top:383px" width="411" height="315" viewBox="48 383 411 315"><rect x="48" y="383" width="411" height="315" fill="#000"/><line x1="49.09" y1="383" x2="49.09" y2="698" stroke="#5e5e5e" stroke-width="1.0" /><line x1="56.06" y1="383" x2="56.06" y2="698" stroke="#5e5e5e" stroke-width="1.0" /><line x1="63.03" y1="383" x2="63.03" y2="698" stroke="#5e5e5e" stroke-width="1.0" /><line x1="70.00" y1="383" x2="70.00" y2="698" stroke="#5e5e5e" stroke-width="1.0" /><line x1="76.97" y1="383" x2="76.97" y2="698" stroke="#5e5e5e" stroke-width="1.0" /><line x1="83.94" y1="383" x2="83.94" y2="698" stroke="#5e5e5e" stroke-width="1.0" /><line x1="90.91" y1="383" x2="90.91" y2="698" stroke="#5e5e5e" stroke-width="1.0" /><line x1="97.88" y1="383" x2="97.88" y2="698" stroke="#5e5e5e" stroke-width="1.0" /><line x1="104.85" y1="383" x2="104.85" y2="698" stroke="#5e5e5e" stroke-width="1.0" /><line x1="111.82" y1="383" x2="111.82" y2="698" stroke="#5e5e5e" stroke-width="1.0" /><line x1="118.79" y1="383" x2="118.79" y2="698" stroke="#5e5e5e" stroke-width="1.0" /><line x1="125.76" y1="383" x2="125.76" y2="698" stroke="#5e5e5e" stroke-width="1.0" /><line x1="132.73" y1="383" x2="132.73" y2="698" stroke="#5e5e5e" stroke-width="1.0" /><line x1="139.70" y1="383" x2="139.70" y2="698" stroke="#5e5e5e" stroke-width="1.0" /><line x1="146.67" y1="383" x2="146.67" y2="698" stroke="#5e5e5e" stroke-width="1.0" /><line x1="153.64" y1="383" x2="153.64" y2="698" stroke="#5e5e5e" stroke-width="1.0" /><line x1="160.61" y1="383" x2="160.61" y2="698" stroke="#5e5e5e" stroke-width="1.0" /><line x1="167.58" y1="383" x2="167.58" y2="698" stroke="#5e5e5e" stroke-width="1.0" /><line x1="174.55" y1="383" x2="174.55" y2="698" stroke="#5e5e5e" stroke-width="1.0" /><line x1="181.52" y1="383" x2="181.52" y2="698" stroke="#5e5e5e" stroke-width="1.0" /><line x1="188.49" y1="383" x2="188.49" y2="698" stroke="#5e5e5e" stroke-width="1.0" /><line x1="195.46" y1="383" x2="195.46" y2="698" stroke="#5e5e5e" stroke-width="1.0" /><line x1="202.43" y1="383" x2="202.43" y2="698" stroke="#5e5e5e" stroke-width="1.0" /><line x1="209.40" y1="383" x2="209.40" y2="698" stroke="#5e5e5e" stroke-width="1.0" /><line x1="216.37" y1="383" x2="216.37" y2="698" stroke="#5e5e5e" stroke-width="1.0" /><line x1="223.34" y1="383" x2="223.34" y2="698" stroke="#5e5e5e" stroke-width="1.0" /><line x1="230.31" y1="383" x2="230.31" y2="698" stroke="#5e5e5e" stroke-width="1.0" /><line x1="237.28" y1="383" x2="237.28" y2="698" stroke="#5e5e5e" stroke-width="1.0" /><line x1="244.25" y1="383" x2="244.25" y2="698" stroke="#5e5e5e" stroke-width="1.0" /><line x1="251.22" y1="383" x2="251.22" y2="698" stroke="#5e5e5e" stroke-width="1.0" /><line x1="258.19" y1="383" x2="258.19" y2="698" stroke="#5e5e5e" stroke-width="1.0" /><line x1="265.16" y1="383" x2="265.16" y2="698" stroke="#5e5e5e" stroke-width="1.0" /><line x1="272.13" y1="383" x2="272.13" y2="698" stroke="#5e5e5e" stroke-width="1.0" /><line x1="279.10" y1="383" x2="279.10" y2="698" stroke="#5e5e5e" stroke-width="1.0" /><line x1="286.07" y1="383" x2="286.07" y2="698" stroke="#5e5e5e" stroke-width="1.0" /><line x1="293.04" y1="383" x2="293.04" y2="698" stroke="#5e5e5e" stroke-width="1.0" /><line x1="300.01" y1="383" x2="300.01" y2="698" stroke="#5e5e5e" stroke-width="1.0" /><line x1="306.98" y1="383" x2="306.98" y2="698" stroke="#5e5e5e" stroke-width="1.0" /><line x1="313.95" y1="383" x2="313.95" y2="698" stroke="#5e5e5e" stroke-width="1.0" /><line x1="320.92" y1="383" x2="320.92" y2="698" stroke="#5e5e5e" stroke-width="1.0" /><line x1="327.89" y1="383" x2="327.89" y2="698" stroke="#5e5e5e" stroke-width="1.0" /><line x1="334.86" y1="383" x2="334.86" y2="698" stroke="#5e5e5e" stroke-width="1.0" /><line x1="341.83" y1="383" x2="341.83" y2="698" stroke="#5e5e5e" stroke-width="1.0" /><line x1="348.80" y1="383" x2="348.80" y2="698" stroke="#5e5e5e" stroke-width="1.0" /><line x1="355.77" y1="383" x2="355.77" y2="698" stroke="#5e5e5e" stroke-width="1.0" /><line x1="362.74" y1="383" x2="362.74" y2="698" stroke="#5e5e5e" stroke-width="1.0" /><line x1="369.71" y1="383" x2="369.71" y2="698" stroke="#5e5e5e" stroke-width="1.0" /><line x1="376.68" y1="383" x2="376.68" y2="698" stroke="#5e5e5e" stroke-width="1.0" /><line x1="383.65" y1="383" x2="383.65" y2="698" stroke="#5e5e5e" stroke-width="1.0" /><line x1="390.62" y1="383" x2="390.62" y2="698" stroke="#5e5e5e" stroke-width="1.0" /><line x1="397.59" y1="383" x2="397.59" y2="698" stroke="#5e5e5e" stroke-width="1.0" /><line x1="404.56" y1="383" x2="404.56" y2="698" stroke="#5e5e5e" stroke-width="1.0" /><line x1="411.53" y1="383" x2="411.53" y2="698" stroke="#5e5e5e" stroke-width="1.0" /><line x1="418.50" y1="383" x2="418.50" y2="698" stroke="#5e5e5e" stroke-width="1.0" /><line x1="425.47" y1="383" x2="425.47" y2="698" stroke="#5e5e5e" stroke-width="1.0" /><line x1="432.44" y1="383" x2="432.44" y2="698" stroke="#5e5e5e" stroke-width="1.0" /><line x1="439.41" y1="383" x2="439.41" y2="698" stroke="#5e5e5e" stroke-width="1.0" /><line x1="446.38" y1="383" x2="446.38" y2="698" stroke="#5e5e5e" stroke-width="1.0" /><line x1="453.35" y1="383" x2="453.35" y2="698" stroke="#5e5e5e" stroke-width="1.0" /><line x1="48" y1="388.05" x2="459" y2="388.05" stroke="#5e5e5e" stroke-width="1.0" /><line x1="48" y1="395.00" x2="459" y2="395.00" stroke="#5e5e5e" stroke-width="1.0" /><line x1="48" y1="401.95" x2="459" y2="401.95" stroke="#5e5e5e" stroke-width="1.0" /><line x1="48" y1="408.90" x2="459" y2="408.90" stroke="#5e5e5e" stroke-width="1.0" /><line x1="48" y1="415.85" x2="459" y2="415.85" stroke="#5e5e5e" stroke-width="1.0" /><line x1="48" y1="422.80" x2="459" y2="422.80" stroke="#5e5e5e" stroke-width="1.0" /><line x1="48" y1="429.75" x2="459" y2="429.75" stroke="#5e5e5e" stroke-width="1.0" /><line x1="48" y1="436.70" x2="459" y2="436.70" stroke="#5e5e5e" stroke-width="1.0" /><line x1="48" y1="443.65" x2="459" y2="443.65" stroke="#5e5e5e" stroke-width="1.0" /><line x1="48" y1="450.60" x2="459" y2="450.60" stroke="#5e5e5e" stroke-width="1.0" /><line x1="48" y1="457.55" x2="459" y2="457.55" stroke="#5e5e5e" stroke-width="1.0" /><line x1="48" y1="464.50" x2="459" y2="464.50" stroke="#5e5e5e" stroke-width="1.0" /><line x1="48" y1="471.45" x2="459" y2="471.45" stroke="#5e5e5e" stroke-width="1.0" /><line x1="48" y1="478.40" x2="459" y2="478.40" stroke="#5e5e5e" stroke-width="1.0" /><line x1="48" y1="485.35" x2="459" y2="485.35" stroke="#5e5e5e" stroke-width="1.0" /><line x1="48" y1="492.30" x2="459" y2="492.30" stroke="#5e5e5e" stroke-width="1.0" /><line x1="48" y1="499.25" x2="459" y2="499.25" stroke="#5e5e5e" stroke-width="1.0" /><line x1="48" y1="506.20" x2="459" y2="506.20" stroke="#5e5e5e" stroke-width="1.0" /><line x1="48" y1="513.15" x2="459" y2="513.15" stroke="#5e5e5e" stroke-width="1.0" /><line x1="48" y1="520.10" x2="459" y2="520.10" stroke="#5e5e5e" stroke-width="1.0" /><line x1="48" y1="527.05" x2="459" y2="527.05" stroke="#5e5e5e" stroke-width="1.0" /><line x1="48" y1="534.00" x2="459" y2="534.00" stroke="#5e5e5e" stroke-width="1.0" /><line x1="48" y1="540.95" x2="459" y2="540.95" stroke="#5e5e5e" stroke-width="1.0" /><line x1="48" y1="547.90" x2="459" y2="547.90" stroke="#5e5e5e" stroke-width="1.0" /><line x1="48" y1="554.85" x2="459" y2="554.85" stroke="#5e5e5e" stroke-width="1.0" /><line x1="48" y1="561.80" x2="459" y2="561.80" stroke="#5e5e5e" stroke-width="1.0" /><line x1="48" y1="568.75" x2="459" y2="568.75" stroke="#5e5e5e" stroke-width="1.0" /><line x1="48" y1="575.70" x2="459" y2="575.70" stroke="#5e5e5e" stroke-width="1.0" /><line x1="48" y1="582.65" x2="459" y2="582.65" stroke="#5e5e5e" stroke-width="1.0" /><line x1="48" y1="589.60" x2="459" y2="589.60" stroke="#5e5e5e" stroke-width="1.0" /><line x1="48" y1="596.55" x2="459" y2="596.55" stroke="#5e5e5e" stroke-width="1.0" /><line x1="48" y1="603.50" x2="459" y2="603.50" stroke="#5e5e5e" stroke-width="1.0" /><line x1="48" y1="610.45" x2="459" y2="610.45" stroke="#5e5e5e" stroke-width="1.0" /><line x1="48" y1="617.40" x2="459" y2="617.40" stroke="#5e5e5e" stroke-width="1.0" /><line x1="48" y1="624.35" x2="459" y2="624.35" stroke="#5e5e5e" stroke-width="1.0" /><line x1="48" y1="631.30" x2="459" y2="631.30" stroke="#5e5e5e" stroke-width="1.0" /><line x1="48" y1="638.25" x2="459" y2="638.25" stroke="#5e5e5e" stroke-width="1.0" /><line x1="48" y1="645.20" x2="459" y2="645.20" stroke="#5e5e5e" stroke-width="1.0" /><line x1="48" y1="652.15" x2="459" y2="652.15" stroke="#5e5e5e" stroke-width="1.0" /><line x1="48" y1="659.10" x2="459" y2="659.10" stroke="#5e5e5e" stroke-width="1.0" /><line x1="48" y1="666.05" x2="459" y2="666.05" stroke="#5e5e5e" stroke-width="1.0" /><line x1="48" y1="673.00" x2="459" y2="673.00" stroke="#5e5e5e" stroke-width="1.0" /><line x1="48" y1="679.95" x2="459" y2="679.95" stroke="#5e5e5e" stroke-width="1.0" /><line x1="48" y1="686.90" x2="459" y2="686.90" stroke="#5e5e5e" stroke-width="1.0" /><line x1="48" y1="693.85" x2="459" y2="693.85" stroke="#5e5e5e" stroke-width="1.0" /><line x1="97.88" y1="383" x2="97.88" y2="698" stroke="#888888" stroke-width="1" /><line x1="153.64" y1="383" x2="153.64" y2="698" stroke="#888888" stroke-width="1" /><line x1="209.40" y1="383" x2="209.40" y2="698" stroke="#888888" stroke-width="1" /><line x1="265.16" y1="383" x2="265.16" y2="698" stroke="#888888" stroke-width="1" /><line x1="320.92" y1="383" x2="320.92" y2="698" stroke="#888888" stroke-width="1" /><line x1="376.68" y1="383" x2="376.68" y2="698" stroke="#888888" stroke-width="1" /><line x1="432.44" y1="383" x2="432.44" y2="698" stroke="#888888" stroke-width="1" /><line x1="48" y1="395.00" x2="459" y2="395.00" stroke="#888888" stroke-width="1" /><line x1="48" y1="450.60" x2="459" y2="450.60" stroke="#888888" stroke-width="1" /><line x1="48" y1="506.20" x2="459" y2="506.20" stroke="#888888" stroke-width="1" /><line x1="48" y1="561.80" x2="459" y2="561.80" stroke="#888888" stroke-width="1" /><line x1="48" y1="617.40" x2="459" y2="617.40" stroke="#888888" stroke-width="1" /><line x1="48" y1="673.00" x2="459" y2="673.00" stroke="#888888" stroke-width="1" /><line x1="348.8" y1="383" x2="348.8" y2="698" stroke="#2a5a5a" stroke-width="1.0" /><line x1="48" y1="589.6" x2="459" y2="589.6" stroke="#2a5a5a" stroke-width="1.0" /><line x1="72.5" y1="472.5" x2="245.9" y2="472.5" stroke="#3a7e5e" stroke-width="1.0" /><line x1="72.5" y1="479.4" x2="245.9" y2="479.4" stroke="#3a7e5e" stroke-width="1.0" /><line x1="72.5" y1="534.6" x2="245.9" y2="534.6" stroke="#3a7e5e" stroke-width="1.0" /><line x1="72.5" y1="541.5" x2="245.9" y2="541.5" stroke="#3a7e5e" stroke-width="1.0" /><line x1="72.5" y1="472.5" x2="72.5" y2="541.5" stroke="#3a7e5e" stroke-width="1.0" /><line x1="79.4" y1="472.5" x2="79.4" y2="541.5" stroke="#3a7e5e" stroke-width="1.0" /><line x1="123.3" y1="472.5" x2="123.3" y2="541.5" stroke="#3a7e5e" stroke-width="1.0" /><line x1="142.1" y1="472.5" x2="142.1" y2="541.5" stroke="#3a7e5e" stroke-width="1.0" /><line x1="239.2" y1="472.5" x2="239.2" y2="589.6" stroke="#3a7e5e" stroke-width="1.0" /><line x1="244.9" y1="472.5" x2="244.9" y2="589.6" stroke="#3a7e5e" stroke-width="1.0" /><line x1="104.5" y1="473.2" x2="109.5" y2="478.2" stroke="#3a7e5e" stroke-width="1" /><line x1="104.5" y1="478.2" x2="109.5" y2="473.2" stroke="#3a7e5e" stroke-width="1" /><line x1="109.5" y1="481.3" x2="114.5" y2="486.3" stroke="#3a7e5e" stroke-width="1" /><line x1="109.5" y1="486.3" x2="114.5" y2="481.3" stroke="#3a7e5e" stroke-width="1" /><line x1="73.2" y1="504.5" x2="78.2" y2="509.5" stroke="#3a7e5e" stroke-width="1" /><line x1="73.2" y1="509.5" x2="78.2" y2="504.5" stroke="#3a7e5e" stroke-width="1" /><line x1="86.9" y1="503.9" x2="91.9" y2="508.9" stroke="#3a7e5e" stroke-width="1" /><line x1="86.9" y1="508.9" x2="91.9" y2="503.9" stroke="#3a7e5e" stroke-width="1" /><line x1="135.8" y1="504.5" x2="140.8" y2="509.5" stroke="#3a7e5e" stroke-width="1" /><line x1="135.8" y1="509.5" x2="140.8" y2="504.5" stroke="#3a7e5e" stroke-width="1" /><line x1="152.7" y1="472.5" x2="157.7" y2="477.5" stroke="#3a7e5e" stroke-width="1" /><line x1="152.7" y1="477.5" x2="157.7" y2="472.5" stroke="#3a7e5e" stroke-width="1" /><line x1="152.7" y1="535.2" x2="157.7" y2="540.2" stroke="#3a7e5e" stroke-width="1" /><line x1="152.7" y1="540.2" x2="157.7" y2="535.2" stroke="#3a7e5e" stroke-width="1" /><line x1="104.5" y1="535.2" x2="109.5" y2="540.2" stroke="#3a7e5e" stroke-width="1" /><line x1="104.5" y1="540.2" x2="109.5" y2="535.2" stroke="#3a7e5e" stroke-width="1" /><line x1="239.5" y1="478.8" x2="244.5" y2="483.8" stroke="#3a7e5e" stroke-width="1" /><line x1="239.5" y1="483.8" x2="244.5" y2="478.8" stroke="#3a7e5e" stroke-width="1" /><line x1="239.5" y1="556.1" x2="244.5" y2="561.1" stroke="#3a7e5e" stroke-width="1" /><line x1="239.5" y1="561.1" x2="244.5" y2="556.1" stroke="#3a7e5e" stroke-width="1" /><line x1="177.5" y1="504.0" x2="182.5" y2="509.0" stroke="#3a7e5e" stroke-width="1" /><line x1="177.5" y1="509.0" x2="182.5" y2="504.0" stroke="#3a7e5e" stroke-width="1" /><line x1="152.7" y1="515.8" x2="157.7" y2="520.8" stroke="#d06060" stroke-width="1" /><line x1="152.7" y1="520.8" x2="157.7" y2="515.8" stroke="#d06060" stroke-width="1" /><rect x="100.1" y="489.4" width="23.200000000000003" height="44.60000000000002" fill="#f4f8f6"/><rect x="104" y="495" width="2" height="7.5" fill="#181818"/><rect x="104" y="504" width="2" height="7.5" fill="#181818"/><rect x="107.5" y="495" width="2.0" height="7.5" fill="#181818"/><rect x="107.5" y="504" width="2.0" height="7.5" fill="#181818"/><rect x="111" y="495" width="2" height="7.5" fill="#181818"/><rect x="111" y="504" width="2" height="7.5" fill="#181818"/><rect x="114.5" y="495" width="2.0" height="7.5" fill="#181818"/><rect x="114.5" y="504" width="2.0" height="7.5" fill="#181818"/><rect x="118" y="495" width="2" height="7.5" fill="#181818"/><rect x="118" y="504" width="2" height="7.5" fill="#181818"/><rect x="103" y="491" width="18" height="2" fill="#404040"/><rect x="115.5" y="514" width="6.0" height="2.2000000000000455" fill="#101010"/><rect x="103.6" y="517.6" width="2.0" height="1.1999999999999318" fill="#303030"/><rect x="116.1" y="517.6" width="4.0" height="1.1999999999999318" fill="#303030"/><rect x="120.6" y="517.6" width="0.9000000000000057" height="1.1999999999999318" fill="#101010"/><rect x="104.2" y="519.4" width="6.0" height="1.2000000000000455" fill="#101010"/><rect x="111.7" y="519.4" width="4.0" height="1.2000000000000455" fill="#585858"/><rect x="116.2" y="519.4" width="5.299999999999997" height="1.2000000000000455" fill="#303030"/><rect x="103.0" y="521.2" width="6.0" height="1.1999999999999318" fill="#585858"/><rect x="110.5" y="521.2" width="2.0" height="1.1999999999999318" fill="#585858"/><rect x="113.5" y="521.2" width="2.0" height="1.1999999999999318" fill="#303030"/><rect x="116.5" y="521.2" width="5.0" height="1.1999999999999318" fill="#303030"/><rect x="106.0" y="523.0" width="9.0" height="1.2000000000000455" fill="#303030"/><rect x="116.0" y="523.0" width="5.5" height="1.2000000000000455" fill="#101010"/><rect x="102.9" y="524.8" width="4.0" height="2.2000000000000455" fill="#101010"/><rect x="107.9" y="524.8" width="6.0" height="2.2000000000000455" fill="#585858"/><rect x="114.9" y="524.8" width="6.599999999999994" height="2.2000000000000455" fill="#585858"/><rect x="103.4" y="528.0" width="2.0" height="1.2000000000000455" fill="#585858"/><rect x="103.9" y="529.8" width="6.0" height="1.8000000000000682" fill="#101010"/><rect x="111.4" y="529.8" width="4.0" height="1.8000000000000682" fill="#303030"/><rect x="116.4" y="529.8" width="4.0" height="1.8000000000000682" fill="#101010"/><line x1="96" y1="513" x2="100" y2="513" stroke="#ddd" stroke-width="1.0" /><line x1="123" y1="513" x2="127" y2="513" stroke="#ddd" stroke-width="1.0" /><line x1="100.1" y1="489.4" x2="100.1" y2="534" stroke="#a0e0d0" stroke-width="1.0" /><rect x="151.5" y="488.2" width="8.099999999999994" height="8.800000000000011" stroke="#c050d0" stroke-width="1.2" fill="#5a2070" /><rect x="150.9" y="502.6" width="9.400000000000006" height="8.199999999999989" stroke="#c050d0" stroke-width="1.2" fill="#5a2070" /><line x1="152" y1="492.6" x2="159" y2="492.6" stroke="#c050d0" stroke-width="0.8" /><line x1="155.5" y1="489" x2="155.5" y2="496.5" stroke="#c050d0" stroke-width="0.8" /><line x1="151.5" y1="506.7" x2="159.8" y2="506.7" stroke="#c050d0" stroke-width="0.8" /><line x1="155.6" y1="503" x2="155.6" y2="510.5" stroke="#c050d0" stroke-width="0.8" /><rect x="149.2" y="502.6" width="12.300000000000011" height="31.399999999999977" stroke="#d05050" stroke-width="1.0" fill="none" /><line x1="149.2" y1="520" x2="161.5" y2="520" stroke="#3e8864" stroke-width="0.6" /><rect x="245.5" y="478.7" width="7.699999999999989" height="55.69999999999999" stroke="#d8c860" stroke-width="1.0" fill="none" /><rect x="245.5" y="478.7" width="7.699999999999989" height="55.69999999999999" stroke="#c02020" stroke-width="1.0" fill="none" stroke-dasharray="4 4"/><rect x="240.8" y="488.6" width="2.3999999999999773" height="45.10000000000002" fill="#f0f0f0"/><rect x="237.6" y="470.8" width="5.600000000000023" height="5.600000000000023" fill="#fff"/><rect x="237.6" y="503.8" width="5.600000000000023" height="5.600000000000023" fill="#fff"/><rect x="237.6" y="536.0" width="5.600000000000023" height="5.599999999999909" fill="#fff"/><rect x="246.0" y="470.8" width="5.600000000000023" height="5.600000000000023" fill="#fff"/><rect x="246.0" y="536.0" width="5.600000000000023" height="5.599999999999909" fill="#fff"/><rect x="254.09999999999997" y="470.8" width="5.600000000000023" height="5.600000000000023" fill="#fff"/><rect x="254.09999999999997" y="503.8" width="5.600000000000023" height="5.600000000000023" fill="#fff"/><rect x="254.09999999999997" y="536.0" width="5.600000000000023" height="5.599999999999909" fill="#fff"/><text x="235" y="510.5" font-family="Liberation Sans" font-size="10" fill="#d4d4d4" text-anchor="end">128.0</text><text x="248.8" y="465" font-family="Liberation Sans" font-size="10" fill="#d4d4d4" text-anchor="middle">16.0</text></svg><svg style="left:464px;top:383px" width="407" height="315" viewBox="464 383 407 315"><rect x="464" y="383" width="407" height="315" fill="#000"/><line x1="469.06" y1="383" x2="469.06" y2="698" stroke="#5e5e5e" stroke-width="1.0" /><line x1="476.03" y1="383" x2="476.03" y2="698" stroke="#5e5e5e" stroke-width="1.0" /><line x1="483.00" y1="383" x2="483.00" y2="698" stroke="#5e5e5e" stroke-width="1.0" /><line x1="489.97" y1="383" x2="489.97" y2="698" stroke="#5e5e5e" stroke-width="1.0" /><line x1="496.94" y1="383" x2="496.94" y2="698" stroke="#5e5e5e" stroke-width="1.0" /><line x1="503.91" y1="383" x2="503.91" y2="698" stroke="#5e5e5e" stroke-width="1.0" /><line x1="510.88" y1="383" x2="510.88" y2="698" stroke="#5e5e5e" stroke-width="1.0" /><line x1="517.85" y1="383" x2="517.85" y2="698" stroke="#5e5e5e" stroke-width="1.0" /><line x1="524.82" y1="383" x2="524.82" y2="698" stroke="#5e5e5e" stroke-width="1.0" /><line x1="531.79" y1="383" x2="531.79" y2="698" stroke="#5e5e5e" stroke-width="1.0" /><line x1="538.76" y1="383" x2="538.76" y2="698" stroke="#5e5e5e" stroke-width="1.0" /><line x1="545.73" y1="383" x2="545.73" y2="698" stroke="#5e5e5e" stroke-width="1.0" /><line x1="552.70" y1="383" x2="552.70" y2="698" stroke="#5e5e5e" stroke-width="1.0" /><line x1="559.67" y1="383" x2="559.67" y2="698" stroke="#5e5e5e" stroke-width="1.0" /><line x1="566.64" y1="383" x2="566.64" y2="698" stroke="#5e5e5e" stroke-width="1.0" /><line x1="573.61" y1="383" x2="573.61" y2="698" stroke="#5e5e5e" stroke-width="1.0" /><line x1="580.58" y1="383" x2="580.58" y2="698" stroke="#5e5e5e" stroke-width="1.0" /><line x1="587.55" y1="383" x2="587.55" y2="698" stroke="#5e5e5e" stroke-width="1.0" /><line x1="594.52" y1="383" x2="594.52" y2="698" stroke="#5e5e5e" stroke-width="1.0" /><line x1="601.49" y1="383" x2="601.49" y2="698" stroke="#5e5e5e" stroke-width="1.0" /><line x1="608.46" y1="383" x2="608.46" y2="698" stroke="#5e5e5e" stroke-width="1.0" /><line x1="615.43" y1="383" x2="615.43" y2="698" stroke="#5e5e5e" stroke-width="1.0" /><line x1="622.40" y1="383" x2="622.40" y2="698" stroke="#5e5e5e" stroke-width="1.0" /><line x1="629.37" y1="383" x2="629.37" y2="698" stroke="#5e5e5e" stroke-width="1.0" /><line x1="636.34" y1="383" x2="636.34" y2="698" stroke="#5e5e5e" stroke-width="1.0" /><line x1="643.31" y1="383" x2="643.31" y2="698" stroke="#5e5e5e" stroke-width="1.0" /><line x1="650.28" y1="383" x2="650.28" y2="698" stroke="#5e5e5e" stroke-width="1.0" /><line x1="657.25" y1="383" x2="657.25" y2="698" stroke="#5e5e5e" stroke-width="1.0" /><line x1="664.22" y1="383" x2="664.22" y2="698" stroke="#5e5e5e" stroke-width="1.0" /><line x1="671.19" y1="383" x2="671.19" y2="698" stroke="#5e5e5e" stroke-width="1.0" /><line x1="678.16" y1="383" x2="678.16" y2="698" stroke="#5e5e5e" stroke-width="1.0" /><line x1="685.13" y1="383" x2="685.13" y2="698" stroke="#5e5e5e" stroke-width="1.0" /><line x1="692.10" y1="383" x2="692.10" y2="698" stroke="#5e5e5e" stroke-width="1.0" /><line x1="699.07" y1="383" x2="699.07" y2="698" stroke="#5e5e5e" stroke-width="1.0" /><line x1="706.04" y1="383" x2="706.04" y2="698" stroke="#5e5e5e" stroke-width="1.0" /><line x1="713.01" y1="383" x2="713.01" y2="698" stroke="#5e5e5e" stroke-width="1.0" /><line x1="719.98" y1="383" x2="719.98" y2="698" stroke="#5e5e5e" stroke-width="1.0" /><line x1="726.95" y1="383" x2="726.95" y2="698" stroke="#5e5e5e" stroke-width="1.0" /><line x1="733.92" y1="383" x2="733.92" y2="698" stroke="#5e5e5e" stroke-width="1.0" /><line x1="740.89" y1="383" x2="740.89" y2="698" stroke="#5e5e5e" stroke-width="1.0" /><line x1="747.86" y1="383" x2="747.86" y2="698" stroke="#5e5e5e" stroke-width="1.0" /><line x1="754.83" y1="383" x2="754.83" y2="698" stroke="#5e5e5e" stroke-width="1.0" /><line x1="761.80" y1="383" x2="761.80" y2="698" stroke="#5e5e5e" stroke-width="1.0" /><line x1="768.77" y1="383" x2="768.77" y2="698" stroke="#5e5e5e" stroke-width="1.0" /><line x1="775.74" y1="383" x2="775.74" y2="698" stroke="#5e5e5e" stroke-width="1.0" /><line x1="782.71" y1="383" x2="782.71" y2="698" stroke="#5e5e5e" stroke-width="1.0" /><line x1="789.68" y1="383" x2="789.68" y2="698" stroke="#5e5e5e" stroke-width="1.0" /><line x1="796.65" y1="383" x2="796.65" y2="698" stroke="#5e5e5e" stroke-width="1.0" /><line x1="803.62" y1="383" x2="803.62" y2="698" stroke="#5e5e5e" stroke-width="1.0" /><line x1="810.59" y1="383" x2="810.59" y2="698" stroke="#5e5e5e" stroke-width="1.0" /><line x1="817.56" y1="383" x2="817.56" y2="698" stroke="#5e5e5e" stroke-width="1.0" /><line x1="824.53" y1="383" x2="824.53" y2="698" stroke="#5e5e5e" stroke-width="1.0" /><line x1="831.50" y1="383" x2="831.50" y2="698" stroke="#5e5e5e" stroke-width="1.0" /><line x1="838.47" y1="383" x2="838.47" y2="698" stroke="#5e5e5e" stroke-width="1.0" /><line x1="845.44" y1="383" x2="845.44" y2="698" stroke="#5e5e5e" stroke-width="1.0" /><line x1="852.41" y1="383" x2="852.41" y2="698" stroke="#5e5e5e" stroke-width="1.0" /><line x1="859.38" y1="383" x2="859.38" y2="698" stroke="#5e5e5e" stroke-width="1.0" /><line x1="866.35" y1="383" x2="866.35" y2="698" stroke="#5e5e5e" stroke-width="1.0" /><line x1="464" y1="386.45" x2="871" y2="386.45" stroke="#5e5e5e" stroke-width="1.0" /><line x1="464" y1="393.40" x2="871" y2="393.40" stroke="#5e5e5e" stroke-width="1.0" /><line x1="464" y1="400.35" x2="871" y2="400.35" stroke="#5e5e5e" stroke-width="1.0" /><line x1="464" y1="407.30" x2="871" y2="407.30" stroke="#5e5e5e" stroke-width="1.0" /><line x1="464" y1="414.25" x2="871" y2="414.25" stroke="#5e5e5e" stroke-width="1.0" /><line x1="464" y1="421.20" x2="871" y2="421.20" stroke="#5e5e5e" stroke-width="1.0" /><line x1="464" y1="428.15" x2="871" y2="428.15" stroke="#5e5e5e" stroke-width="1.0" /><line x1="464" y1="435.10" x2="871" y2="435.10" stroke="#5e5e5e" stroke-width="1.0" /><line x1="464" y1="442.05" x2="871" y2="442.05" stroke="#5e5e5e" stroke-width="1.0" /><line x1="464" y1="449.00" x2="871" y2="449.00" stroke="#5e5e5e" stroke-width="1.0" /><line x1="464" y1="455.95" x2="871" y2="455.95" stroke="#5e5e5e" stroke-width="1.0" /><line x1="464" y1="462.90" x2="871" y2="462.90" stroke="#5e5e5e" stroke-width="1.0" /><line x1="464" y1="469.85" x2="871" y2="469.85" stroke="#5e5e5e" stroke-width="1.0" /><line x1="464" y1="476.80" x2="871" y2="476.80" stroke="#5e5e5e" stroke-width="1.0" /><line x1="464" y1="483.75" x2="871" y2="483.75" stroke="#5e5e5e" stroke-width="1.0" /><line x1="464" y1="490.70" x2="871" y2="490.70" stroke="#5e5e5e" stroke-width="1.0" /><line x1="464" y1="497.65" x2="871" y2="497.65" stroke="#5e5e5e" stroke-width="1.0" /><line x1="464" y1="504.60" x2="871" y2="504.60" stroke="#5e5e5e" stroke-width="1.0" /><line x1="464" y1="511.55" x2="871" y2="511.55" stroke="#5e5e5e" stroke-width="1.0" /><line x1="464" y1="518.50" x2="871" y2="518.50" stroke="#5e5e5e" stroke-width="1.0" /><line x1="464" y1="525.45" x2="871" y2="525.45" stroke="#5e5e5e" stroke-width="1.0" /><line x1="464" y1="532.40" x2="871" y2="532.40" stroke="#5e5e5e" stroke-width="1.0" /><line x1="464" y1="539.35" x2="871" y2="539.35" stroke="#5e5e5e" stroke-width="1.0" /><line x1="464" y1="546.30" x2="871" y2="546.30" stroke="#5e5e5e" stroke-width="1.0" /><line x1="464" y1="553.25" x2="871" y2="553.25" stroke="#5e5e5e" stroke-width="1.0" /><line x1="464" y1="560.20" x2="871" y2="560.20" stroke="#5e5e5e" stroke-width="1.0" /><line x1="464" y1="567.15" x2="871" y2="567.15" stroke="#5e5e5e" stroke-width="1.0" /><line x1="464" y1="574.10" x2="871" y2="574.10" stroke="#5e5e5e" stroke-width="1.0" /><line x1="464" y1="581.05" x2="871" y2="581.05" stroke="#5e5e5e" stroke-width="1.0" /><line x1="464" y1="588.00" x2="871" y2="588.00" stroke="#5e5e5e" stroke-width="1.0" /><line x1="464" y1="594.95" x2="871" y2="594.95" stroke="#5e5e5e" stroke-width="1.0" /><line x1="464" y1="601.90" x2="871" y2="601.90" stroke="#5e5e5e" stroke-width="1.0" /><line x1="464" y1="608.85" x2="871" y2="608.85" stroke="#5e5e5e" stroke-width="1.0" /><line x1="464" y1="615.80" x2="871" y2="615.80" stroke="#5e5e5e" stroke-width="1.0" /><line x1="464" y1="622.75" x2="871" y2="622.75" stroke="#5e5e5e" stroke-width="1.0" /><line x1="464" y1="629.70" x2="871" y2="629.70" stroke="#5e5e5e" stroke-width="1.0" /><line x1="464" y1="636.65" x2="871" y2="636.65" stroke="#5e5e5e" stroke-width="1.0" /><line x1="464" y1="643.60" x2="871" y2="643.60" stroke="#5e5e5e" stroke-width="1.0" /><line x1="464" y1="650.55" x2="871" y2="650.55" stroke="#5e5e5e" stroke-width="1.0" /><line x1="464" y1="657.50" x2="871" y2="657.50" stroke="#5e5e5e" stroke-width="1.0" /><line x1="464" y1="664.45" x2="871" y2="664.45" stroke="#5e5e5e" stroke-width="1.0" /><line x1="464" y1="671.40" x2="871" y2="671.40" stroke="#5e5e5e" stroke-width="1.0" /><line x1="464" y1="678.35" x2="871" y2="678.35" stroke="#5e5e5e" stroke-width="1.0" /><line x1="464" y1="685.30" x2="871" y2="685.30" stroke="#5e5e5e" stroke-width="1.0" /><line x1="464" y1="692.25" x2="871" y2="692.25" stroke="#5e5e5e" stroke-width="1.0" /><line x1="483.00" y1="383" x2="483.00" y2="698" stroke="#888888" stroke-width="1" /><line x1="538.76" y1="383" x2="538.76" y2="698" stroke="#888888" stroke-width="1" /><line x1="594.52" y1="383" x2="594.52" y2="698" stroke="#888888" stroke-width="1" /><line x1="650.28" y1="383" x2="650.28" y2="698" stroke="#888888" stroke-width="1" /><line x1="706.04" y1="383" x2="706.04" y2="698" stroke="#888888" stroke-width="1" /><line x1="761.80" y1="383" x2="761.80" y2="698" stroke="#888888" stroke-width="1" /><line x1="817.56" y1="383" x2="817.56" y2="698" stroke="#888888" stroke-width="1" /><line x1="622.4" y1="383" x2="622.4" y2="698" stroke="#5e2016" stroke-width="1.0" /><line x1="733" y1="588" x2="871" y2="588" stroke="#2a5a5a" stroke-width="1.0" /><line x1="464" y1="588" x2="513" y2="588" stroke="#2a5a5a" stroke-width="1.0" /><line x1="513.2" y1="470.8" x2="844.4" y2="470.8" stroke="#3a7e5e" stroke-width="1.0" /><line x1="513.2" y1="478.1" x2="844.4" y2="478.1" stroke="#3a7e5e" stroke-width="1.0" /><line x1="513.2" y1="533.5" x2="844.4" y2="533.5" stroke="#3a7e5e" stroke-width="1.0" /><line x1="513.2" y1="540" x2="844.4" y2="540" stroke="#3a7e5e" stroke-width="1.0" /><line x1="844.4" y1="470.8" x2="844.4" y2="540" stroke="#3a7e5e" stroke-width="1.0" /><line x1="513.2" y1="470.8" x2="513.2" y2="588" stroke="#3a7e5e" stroke-width="1.0" /><line x1="732.8" y1="478.1" x2="732.8" y2="588" stroke="#3a7e5e" stroke-width="1.0" /><line x1="513.2" y1="588" x2="732.8" y2="588" stroke="#3a7e5e" stroke-width="1.0" /><line x1="528.5" y1="470.8" x2="528.5" y2="488" stroke="#3a7e5e" stroke-width="1.0" /><line x1="552.8" y1="470.8" x2="552.8" y2="488" stroke="#3a7e5e" stroke-width="1.0" /><rect x="560.5" y="477.9" width="54.39999999999998" height="55.30000000000007" stroke="#b03cb0" stroke-width="1.2" fill="none" /><rect x="563.6" y="487.8" width="7.199999999999932" height="7.199999999999989" stroke="#a040c0" stroke-width="1.0" fill="none" /><rect x="561.8" y="501.3" width="11.700000000000045" height="31.900000000000034" stroke="#d05050" stroke-width="1.0" fill="none" /><rect x="529.4" y="488.3" width="23.399999999999977" height="44.099999999999966" fill="#f4f8f6"/><rect x="533.2" y="490.5" width="6.0" height="2.3999999999999773" fill="#606060"/><rect x="541.8" y="493.9" width="1.5" height="2.0" fill="#303030"/><rect x="544.3" y="493.9" width="7.2000000000000455" height="2.0" fill="#606060"/><rect x="538.6" y="497.5" width="6.0" height="1.1999999999999886" fill="#101010"/><rect x="546.6" y="497.5" width="2.5" height="1.1999999999999886" fill="#303030"/><rect x="549.6" y="497.5" width="1.5" height="1.1999999999999886" fill="#303030"/><rect x="538.9" y="500.3" width="4.0" height="1.1999999999999886" fill="#606060"/><rect x="543.4" y="500.3" width="6.0" height="1.1999999999999886" fill="#303030"/><rect x="531.9" y="502.1" width="1.5" height="1.599999999999966" fill="#606060"/><rect x="534.4" y="502.1" width="6.0" height="1.599999999999966" fill="#606060"/><rect x="540.9" y="502.1" width="4.0" height="1.599999999999966" fill="#303030"/><rect x="547.9" y="502.1" width="2.5" height="1.599999999999966" fill="#101010"/><rect x="550.9" y="502.1" width="0.6000000000000227" height="1.599999999999966" fill="#303030"/><rect x="535.4" y="505.3" width="6.0" height="1.599999999999966" fill="#101010"/><rect x="539.9" y="507.9" width="8.0" height="1.2000000000000455" fill="#101010"/><rect x="548.4" y="507.9" width="3.1000000000000227" height="1.2000000000000455" fill="#606060"/><rect x="531.6" y="510.1" width="1.5" height="2.3999999999999773" fill="#606060"/><rect x="533.6" y="510.1" width="1.5" height="2.3999999999999773" fill="#303030"/><rect x="537.1" y="510.1" width="6.0" height="2.3999999999999773" fill="#606060"/><rect x="544.1" y="510.1" width="7.399999999999977" height="2.3999999999999773" fill="#303030"/><rect x="535.1" y="514.1" width="2.5" height="1.6000000000000227" fill="#606060"/><rect x="539.6" y="514.1" width="2.5" height="1.6000000000000227" fill="#303030"/><rect x="543.1" y="514.1" width="8.0" height="1.6000000000000227" fill="#101010"/><rect x="532.5" y="516.3" width="4.0" height="1.2000000000000455" fill="#606060"/><rect x="537.5" y="516.3" width="4.0" height="1.2000000000000455" fill="#606060"/><rect x="542.5" y="516.3" width="4.0" height="1.2000000000000455" fill="#606060"/><rect x="547.0" y="516.3" width="2.5" height="1.2000000000000455" fill="#606060"/><rect x="535.1" y="519.1" width="4.0" height="1.1999999999999318" fill="#101010"/><rect x="539.6" y="519.1" width="1.5" height="1.1999999999999318" fill="#303030"/><rect x="533.3" y="521.3" width="4.0" height="1.6000000000000227" fill="#606060"/><rect x="533.4" y="523.9" width="1.5" height="2.0" fill="#101010"/><rect x="541.4" y="523.9" width="6.0" height="2.0" fill="#606060"/><rect x="538.9" y="526.9" width="1.5" height="1.2000000000000455" fill="#303030"/><rect x="541.4" y="526.9" width="8.0" height="1.2000000000000455" fill="#101010"/><rect x="549.9" y="526.9" width="1.5" height="1.2000000000000455" fill="#303030"/><rect x="532.3" y="529.7" width="8.0" height="2.0" fill="#303030"/><rect x="542.3" y="529.7" width="1.5" height="2.0" fill="#606060"/><rect x="544.3" y="529.7" width="4.0" height="2.0" fill="#303030"/><line x1="529.4" y1="488.3" x2="529.4" y2="532.4" stroke="#a0e0d0" stroke-width="1.0" /><rect x="518.6" y="477.9" width="41.89999999999998" height="55.30000000000007" stroke="#d8c860" stroke-width="1.0" fill="none" /><rect x="518.6" y="477.9" width="41.89999999999998" height="55.30000000000007" stroke="#c02020" stroke-width="1.0" fill="none" stroke-dasharray="4 4"/><rect x="615.8" y="488.3" width="2.7000000000000455" height="44.900000000000034" fill="#e8f4f0"/><rect x="510.90000000000003" y="470.2" width="5.599999999999966" height="5.600000000000023" fill="#fff"/><rect x="510.90000000000003" y="503.0" width="5.599999999999966" height="5.600000000000023" fill="#fff"/><rect x="510.90000000000003" y="535.4000000000001" width="5.599999999999966" height="5.599999999999909" fill="#fff"/><rect x="536.7" y="470.2" width="5.599999999999909" height="5.600000000000023" fill="#fff"/><rect x="536.7" y="535.4000000000001" width="5.599999999999909" height="5.599999999999909" fill="#fff"/><rect x="562.6" y="470.2" width="5.599999999999909" height="5.600000000000023" fill="#fff"/><rect x="562.6" y="503.0" width="5.599999999999909" height="5.600000000000023" fill="#fff"/><rect x="562.6" y="535.4000000000001" width="5.599999999999909" height="5.599999999999909" fill="#fff"/><text x="538.4" y="465" font-family="Liberation Sans" font-size="10" fill="#d4d4d4" text-anchor="middle">96.0</text><text x="506.9" y="509.5" font-family="Liberation Sans" font-size="10" fill="#d4d4d4" text-anchor="end">128.0</text></svg><div style="position:absolute;left:8px;top:39px;width:19px;height:18px;background:repeating-conic-gradient(#fff 0 25%, #d4d0c8 0 50%) 0 0/2px 2px;opacity:1;box-shadow: inset 1px 1px #808080, inset -1px -1px #fff;"></div><div style="position:absolute;left:436px;top:39px;width:18px;height:18px;background:repeating-conic-gradient(#fff 0 25%, #d4d0c8 0 50%) 0 0/2px 2px;opacity:1;box-shadow: inset 1px 1px #808080, inset -1px -1px #fff;"></div><div style="position:absolute;left:455px;top:39px;width:18px;height:18px;background:repeating-conic-gradient(#fff 0 25%, #d4d0c8 0 50%) 0 0/2px 2px;opacity:1;box-shadow: inset 1px 1px #808080, inset -1px -1px #fff;"></div><div style="position:absolute;left:474px;top:39px;width:18px;height:18px;background:repeating-conic-gradient(#fff 0 25%, #d4d0c8 0 50%) 0 0/2px 2px;opacity:1;box-shadow: inset 1px 1px #808080, inset -1px -1px #fff;"></div><div style="position:absolute;left:538px;top:39px;width:19px;height:18px;background:repeating-conic-gradient(#fff 0 25%, #d4d0c8 0 50%) 0 0/2px 2px;opacity:1;box-shadow: inset 1px 1px #808080, inset -1px -1px #fff;"></div><div style="position:absolute;left:557px;top:39px;width:19px;height:18px;background:repeating-conic-gradient(#fff 0 25%, #d4d0c8 0 50%) 0 0/2px 2px;opacity:1;box-shadow: inset 1px 1px #808080, inset -1px -1px #fff;"></div><div style="position:absolute;left:641px;top:39px;width:19px;height:18px;background:repeating-conic-gradient(#fff 0 25%, #d4d0c8 0 50%) 0 0/2px 2px;opacity:1;box-shadow: inset 1px 1px #808080, inset -1px -1px #fff;"></div><div style="position:absolute;left:660px;top:39px;width:18px;height:18px;background:repeating-conic-gradient(#fff 0 25%, #d4d0c8 0 50%) 0 0/2px 2px;opacity:1;box-shadow: inset 1px 1px #808080, inset -1px -1px #fff;"></div><div style="position:absolute;left:718px;top:39px;width:18px;height:18px;background:repeating-conic-gradient(#fff 0 25%, #d4d0c8 0 50%) 0 0/2px 2px;opacity:1;box-shadow: inset 1px 1px #808080, inset -1px -1px #fff;"></div><div style="position:absolute;left:737px;top:39px;width:19px;height:18px;background:repeating-conic-gradient(#fff 0 25%, #d4d0c8 0 50%) 0 0/2px 2px;opacity:1;box-shadow: inset 1px 1px #808080, inset -1px -1px #fff;"></div><div style="position:absolute;left:88px;top:39px;width:1px;height:19px;background:#808080;"></div><div style="position:absolute;left:89px;top:39px;width:1px;height:19px;background:#fff;"></div><div style="position:absolute;left:136px;top:39px;width:1px;height:19px;background:#808080;"></div><div style="position:absolute;left:137px;top:39px;width:1px;height:19px;background:#fff;"></div><div style="position:absolute;left:186px;top:39px;width:1px;height:19px;background:#808080;"></div><div style="position:absolute;left:187px;top:39px;width:1px;height:19px;background:#fff;"></div><div style="position:absolute;left:213px;top:39px;width:1px;height:19px;background:#808080;"></div><div style="position:absolute;left:214px;top:39px;width:1px;height:19px;background:#fff;"></div><div style="position:absolute;left:277px;top:39px;width:1px;height:19px;background:#808080;"></div><div style="position:absolute;left:278px;top:39px;width:1px;height:19px;background:#fff;"></div><div style="position:absolute;left:322px;top:39px;width:1px;height:19px;background:#808080;"></div><div style="position:absolute;left:323px;top:39px;width:1px;height:19px;background:#fff;"></div><div style="position:absolute;left:387px;top:39px;width:1px;height:19px;background:#808080;"></div><div style="position:absolute;left:388px;top:39px;width:1px;height:19px;background:#fff;"></div><div style="position:absolute;left:432px;top:39px;width:1px;height:19px;background:#808080;"></div><div style="position:absolute;left:433px;top:39px;width:1px;height:19px;background:#fff;"></div><div style="position:absolute;left:535px;top:39px;width:1px;height:19px;background:#808080;"></div><div style="position:absolute;left:536px;top:39px;width:1px;height:19px;background:#fff;"></div><div style="position:absolute;left:618px;top:39px;width:1px;height:19px;background:#808080;"></div><div style="position:absolute;left:619px;top:39px;width:1px;height:19px;background:#fff;"></div><svg style="left:0px;top:36px" width="770" height="25" viewBox="0 36 770 25"><line x1="16.2" y1="42.5" x2="16.2" y2="56" stroke="#111" stroke-width="1.1"/><line x1="22.2" y1="42.5" x2="22.2" y2="56" stroke="#111" stroke-width="1.1"/><line x1="11.5" y1="46.2" x2="25.5" y2="46.2" stroke="#111" stroke-width="1.1"/><line x1="11.5" y1="51.8" x2="25.5" y2="51.8" stroke="#111" stroke-width="1.1"/><text x="29.5" y="46.5" font-family="Liberation Sans" font-weight="bold" font-size="6.5" fill="#000">3D</text><line x1="35.8" y1="46" x2="35.8" y2="55" stroke="#111" stroke-width="1.25"/><line x1="38.8" y1="46" x2="38.8" y2="55" stroke="#111" stroke-width="1.25"/><line x1="32.2" y1="49" x2="42.2" y2="49" stroke="#111" stroke-width="1.25"/><line x1="32.2" y1="52" x2="42.2" y2="52" stroke="#111" stroke-width="1.25"/><line x1="51.6" y1="45" x2="51.6" y2="54" stroke="#111" stroke-width="1.25"/><line x1="55.4" y1="45" x2="55.4" y2="54" stroke="#111" stroke-width="1.25"/><line x1="49" y1="47.6" x2="58.2" y2="47.6" stroke="#111" stroke-width="1.25"/><line x1="49" y1="51.4" x2="58.2" y2="51.4" stroke="#111" stroke-width="1.25"/><circle cx="61" cy="44.2" r="2" fill="#70e4f0"/><line x1="70.6" y1="45" x2="70.6" y2="54" stroke="#111" stroke-width="1.25"/><line x1="74.6" y1="45" x2="74.6" y2="54" stroke="#111" stroke-width="1.25"/><line x1="68.2" y1="47.6" x2="77.4" y2="47.6" stroke="#111" stroke-width="1.25"/><line x1="68.2" y1="51.4" x2="77.4" y2="51.4" stroke="#111" stroke-width="1.25"/><circle cx="79" cy="43.6" r="2.7" fill="#50e0f0"/><rect x="96.6" y="41.8" width="7.200000000000003" height="4.200000000000003" fill="#fff" stroke="#1a1ad0" stroke-width="1.3"/><rect x="96.6" y="41.8" width="7.200000000000003" height="1.6" fill="#2020c0"/><rect x="99" y="44.8" width="6.599999999999994" height="4.400000000000006" fill="#fff" stroke="#1a1ad0" stroke-width="1.3"/><rect x="99" y="44.8" width="6.599999999999994" height="1.6" fill="#2020c0"/><rect x="100.2" y="48.4" width="7.799999999999997" height="5.399999999999999" fill="#fff" stroke="#1a1ad0" stroke-width="1.3"/><rect x="100.2" y="48.4" width="7.799999999999997" height="1.6" fill="#2020c0"/><text x="92.8" y="54" font-family="Liberation Sans" font-size="7" fill="#000">L</text><rect x="115.8" y="41.8" width="7.200000000000003" height="4.200000000000003" fill="#fff" stroke="#1a1ad0" stroke-width="1.3"/><rect x="115.8" y="41.8" width="7.200000000000003" height="1.6" fill="#2020c0"/><rect x="118.2" y="44.8" width="6.599999999999994" height="4.400000000000006" fill="#fff" stroke="#1a1ad0" stroke-width="1.3"/><rect x="118.2" y="44.8" width="6.599999999999994" height="1.6" fill="#2020c0"/><rect x="119.4" y="48.4" width="7.799999999999997" height="5.399999999999999" fill="#fff" stroke="#1a1ad0" stroke-width="1.3"/><rect x="119.4" y="48.4" width="7.799999999999997" height="1.6" fill="#2020c0"/><text x="112.0" y="54" font-family="Liberation Sans" font-size="7" fill="#000">S</text><path d="M147.5,47.5 Q151,43.5 154.5,46 Q157,48.5 154,51" fill="none" stroke="#0a0a60" stroke-width="1.8"/><path d="M145.8,45 L146.5,50.5 L151.5,49.5 Z" fill="#0a0a60"/><path d="M173.5,47.5 Q170,43.5 166.5,46 Q164,48.5 167,51" fill="none" stroke="#a8a8a0" stroke-width="1.8"/><path d="M175.2,45 L174.5,50.5 L169.5,49.5 Z" fill="#a8a8a0"/><path d="M197.5,46.625 L200.125,44 L207.625,44 L205.0,46.625 Z" fill="#6060ff"/><path d="M205.0,46.625 L207.625,44 L207.625,51.5 L205.0,54.125 Z" fill="#000080"/><rect x="197.5" y="46.625" width="7.5" height="7.5" fill="#0000d0"/><path d="M203,52 L207,52 M205.5,50.5 L207,52 L205.5,53.5" stroke="#40d0e0" stroke-width="1.2" fill="none"/><rect x="220.5" y="42" width="12.5" height="11" fill="none" stroke="#40a040" stroke-dasharray="1.5 1" stroke-width="1"/><path d="M222,45.32 L223.82,43.5 L229.01999999999998,43.5 L227.2,45.32 Z" fill="#5050ff"/><path d="M227.2,45.32 L229.01999999999998,43.5 L229.01999999999998,48.7 L227.2,50.52 Z" fill="#000070"/><rect x="222" y="45.32" width="5.2" height="5.2" fill="#0000c0"/><path d="M226.5,48.82 L228.32,47 L233.51999999999998,47 L231.7,48.82 Z" fill="#5050ff"/><path d="M231.7,48.82 L233.51999999999998,47 L233.51999999999998,52.2 L231.7,54.02 Z" fill="#000070"/><rect x="226.5" y="48.82" width="5.2" height="5.2" fill="#0000c0"/><path d="M240,44.425 L241.925,42.5 L247.425,42.5 L245.5,44.425 Z" fill="#5050ff"/><path d="M245.5,44.425 L247.425,42.5 L247.425,48.0 L245.5,49.925 Z" fill="#000070"/><rect x="240" y="44.425" width="5.5" height="5.5" fill="#0000c0"/><path d="M245.5,49.425 L247.425,47.5 L252.925,47.5 L251.0,49.425 Z" fill="#5050ff"/><path d="M251.0,49.425 L252.925,47.5 L252.925,53.0 L251.0,54.925 Z" fill="#000070"/><rect x="245.5" y="49.425" width="5.5" height="5.5" fill="#0000c0"/><path d="M247,44 L251,42 M241,53 L244,50" stroke="#60c0a0" stroke-width="1"/><text x="260" y="51.5" font-family="Liberation Sans" font-size="10" fill="#404040">ig</text><path d="M285.5,46 L288.5,43 L296.5,43 L296.5,50 L293.5,53 L285.5,53 Z M285.5,46 L293.5,46 L296.5,43 M293.5,46 L293.5,53" fill="none" stroke="#e02020" stroke-width="1.1" stroke-dasharray="1.3 1"/><path d="M305,46 L308,43 L316,43 L316,50 L313,53 L305,53 Z M305,46 L313,46 L316,43 M313,46 L313,53" fill="none" stroke="#000" stroke-width="1.1" stroke-dasharray="1.3 1"/><path d="M334.5,42 L338.5,49 M338.5,42 L334.5,49" stroke="#000" stroke-width="1.1"/><circle cx="334.2" cy="51" r="1.8" fill="none" stroke="#3030b0" stroke-width="1.2"/><circle cx="338.8" cy="51" r="1.8" fill="none" stroke="#3030b0" stroke-width="1.2"/><rect x="349.5" y="42.2" width="6" height="7" fill="#fff" stroke="#000" stroke-width="1"/><path d="M351,44.5h3M351,46.5h3" stroke="#000" stroke-width="0.8"/><rect x="354.5" y="46" width="6.5" height="6.5" fill="#fff" stroke="#303070" stroke-width="1"/><path d="M356,49h3.5M356,51h3.5" stroke="#303070" stroke-width="0.8"/><rect x="368.5" y="43.2" width="10" height="9.5" rx="1" fill="#1a7070" stroke="#0a4040" stroke-width="0.8"/><rect x="371" y="42" width="5" height="2" fill="#d0d0d0" stroke="#333" stroke-width="0.5"/><rect x="374.5" y="48" width="6.2" height="5" fill="#fff" stroke="#303070" stroke-width="0.9"/><rect x="392.8" y="44.5" width="14.4" height="8" fill="#f0e040"/><path d="M393.5,52.5 L396.5,44.5" stroke="#000" stroke-width="1.5"/><path d="M396.5,52.5 L399.5,44.5" stroke="#000" stroke-width="1.5"/><path d="M399.5,52.5 L402.5,44.5" stroke="#000" stroke-width="1.5"/><path d="M402.5,52.5 L405.5,44.5" stroke="#000" stroke-width="1.5"/><path d="M405.5,52.5 L408.5,44.5" stroke="#000" stroke-width="1.5"/><path d="M414,44.5 L425,44.5 M413.5,52 L424.5,52 M417,52 L420,44.5 M421.5,52 L424.5,44.5" stroke="#202020" stroke-width="1.2" stroke-dasharray="1.5 1"/><circle cx="413.5" cy="44.5" r="1.3" fill="#e03020"/><circle cx="425" cy="44.5" r="1.3" fill="#e03020"/><circle cx="413.5" cy="52.3" r="1.3" fill="#e03020"/><circle cx="425" cy="52.3" r="1.3" fill="#e03020"/><rect x="440.5" y="43.5" width="10" height="9.5" fill="none" stroke="#000" stroke-width="1.2"/><path d="M443,46 L448,51 M448,46 L443,51" stroke="#909090" stroke-width="0.8"/><rect x="439.3" y="42.3" width="2.4" height="2.4" fill="#000"/><rect x="449.3" y="42.3" width="2.4" height="2.4" fill="#000"/><rect x="439.3" y="51.8" width="2.4" height="2.4" fill="#000"/><rect x="449.3" y="51.8" width="2.4" height="2.4" fill="#000"/><rect x="459.3" y="43.5" width="9" height="9" fill="none" stroke="#70d8d8" stroke-width="1" stroke-dasharray="1.2 1"/><path d="M467.5,52 L470.5,55 M467.5,52 L467.5,54.5 M467.5,52 L470,52" stroke="#000" stroke-width="0.9"/><text x="480.5" y="52.5" font-family="Liberation Sans" font-size="10" fill="#303030">tl</text><text x="498" y="52.5" font-family="Liberation Sans" font-size="10" fill="#202020">tl</text><path d="M495.5,48.2 L497.5,46.2 L497.5,50.2 Z M508.8,48.2 L506.8,46.2 L506.8,50.2 Z" fill="#303030"/><path d="M515,45 L519.5,42 L519.5,51 L515,54 Z" fill="#909090" stroke="#000" stroke-width="0.9"/><path d="M522.5,47 L528.5,42.5 L528.5,51 L522.5,54.5 Z" fill="#40a040"/><path d="M522.5,48 L528.5,44.5 L527,50 L523.5,52 Z" fill="#d02010"/><text x="541.2" y="51.3" font-family="Liberation Sans" font-weight="bold" font-size="10.5" fill="#0000b0" stroke="#0000b0" stroke-width="0.7">D</text><text x="547.4" y="55.6" font-family="Liberation Sans" font-weight="bold" font-size="10.5" fill="#d01818" stroke="#d01818" stroke-width="0.7">D</text><text x="580.6" y="50.5" font-family="Liberation Sans" font-weight="bold" font-size="10.5" fill="#0000b0" stroke="#0000b0" stroke-width="0.7">D</text><text x="583.5" y="54.5" font-family="Liberation Sans" font-weight="bold" font-size="10.5" fill="#d01818" stroke="#d01818" stroke-width="0.7">W</text><text x="597.8" y="50.5" font-family="Liberation Sans" font-weight="bold" font-size="10.5" fill="#0000b0" stroke="#0000b0" stroke-width="0.7">D</text><text x="603.8" y="54.5" font-family="Liberation Sans" font-weight="bold" font-size="10.5" fill="#d01818" stroke="#d01818" stroke-width="0.7">R</text><text x="560.5" y="46.5" font-family="Liberation Sans" font-weight="bold" font-size="6" fill="#000">3D</text><path d="M561,54 L566,43.5 L572,48 L574,53" fill="none" stroke="#000" stroke-width="1.3"/><path d="M628,45 q2,-2 4,0 M627,48 q3,2 6,-1 M629,51 q2,2 5,0 L637,47" fill="none" stroke="#707070" stroke-width="1"/><path d="M647.5,43.5 L653.5,43.5 L656.5,47.5 L656.5,50.5 L653.5,53.8 L647.5,53.8 L644.8,50.5 L644.8,47.5 Z M650.5,43.5 L647,49 L654.5,49 Z M644.8,48.5 L656.5,48.5" fill="none" stroke="#000" stroke-width="1.1"/><rect x="664.5" y="44.5" width="11.5" height="9" fill="#f0f0f0" stroke="#000" stroke-width="1.2"/><path d="M665.5,53 L667.7,45" stroke="#000" stroke-width="1"/><path d="M668.1,53 L670.3000000000001,45" stroke="#000" stroke-width="1"/><path d="M670.7,53 L672.9000000000001,45" stroke="#000" stroke-width="1"/><path d="M673.3,53 L675.5,45" stroke="#000" stroke-width="1"/><rect x="690.2" y="42" width="4.5" height="5" fill="#a0a0a0"/><rect x="686.2" y="44" width="6" height="6.5" fill="#3030e0"/><rect x="681.4" y="47.5" width="7.2" height="6.5" fill="#0000f0"/><text x="700.4" y="51.2" font-family="Liberation Sans" font-size="7.8" fill="#000">CM</text><path d="M722.5,53 Q720.5,45 727,43 Q731,42.5 733.5,43.5 Q734,50 728,52.5 Q725,53.5 722.5,53 Z" fill="#30c030" stroke="#000" stroke-width="0.9"/><path d="M721.5,55 L729,45.5" stroke="#000" stroke-width="0.8"/><text x="746" y="47.5" text-anchor="middle" font-family="Liberation Sans" font-size="5.8" font-weight="bold" fill="#d03030">no</text><text x="746" y="53" text-anchor="middle" font-family="Liberation Sans" font-size="5.8" font-weight="bold" fill="#d03030">draw</text></svg><svg style="left:0px;top:62px" width="48" height="400" viewBox="0 62 48 400"><rect x="8.3" y="69.5" width="33.2" height="27.5" fill="#c6c6c4"/><rect x="8.3" y="101" width="33.2" height="27.3" fill="#c6c6c4"/><rect x="8.3" y="134.1" width="33.2" height="26.1" fill="#c6c6c4"/><rect x="8.3" y="171.7" width="33.2" height="26.1" fill="#c6c6c4"/><rect x="8.3" y="204.7" width="33.2" height="25.5" fill="#c6c6c4"/><rect x="8.3" y="240.3" width="33.2" height="27.5" fill="#c6c6c4"/><rect x="8.3" y="272.9" width="33.2" height="26.8" fill="#c6c6c4"/><rect x="8.3" y="305.5" width="33.2" height="27.5" fill="#c6c6c4"/><rect x="8.3" y="338.8" width="33.2" height="27.5" fill="#c6c6c4"/><rect x="8.3" y="376.8" width="33.2" height="26.7" fill="#c6c6c4"/><rect x="8.3" y="408.3" width="33.2" height="27.5" fill="#c6c6c4"/><path d="M6.5,98.5 L6.5,66.5 L44.5,66.5" fill="none" stroke="#808080" stroke-width="1"/><path d="M6.5,98.5 L44.5,98.5 L44.5,66.5" fill="none" stroke="#fff" stroke-width="1"/><rect x="7.5" y="68" width="36" height="29" fill="none" stroke="#fff" stroke-width="1.2" stroke-dasharray="1 1"/><rect x="8" y="165.8" width="35" height="1" fill="#808080"/><rect x="8" y="166.8" width="35" height="1" fill="#fff"/><rect x="8" y="236.4" width="35" height="1" fill="#808080"/><rect x="8" y="237.4" width="35" height="1" fill="#fff"/><rect x="8" y="371.0" width="35" height="1" fill="#808080"/><rect x="8" y="372.0" width="35" height="1" fill="#fff"/><rect x="8" y="440.9" width="35" height="1" fill="#808080"/><rect x="8" y="441.9" width="35" height="1" fill="#fff"/><path d="M19,92.8 L30,87.5 L29.5,86 L37.8,84.3 L32.5,89.5 L31.5,88.5 L20.5,93.8 Z" fill="#2e2e2e"/><path d="M15.5,90 L22,80.5 L20.8,79.5 L29.8,72.3 L27.8,82.8 L26.4,81.8 L19.5,92.2 Z" fill="#e01010"/><path d="M16.5,89.5 L23,80.2 L21.8,79.3 L29.5,73" fill="none" stroke="#ff5050" stroke-width="0.8"/><defs><radialGradient id="rb" cx="0.4" cy="0.35" r="0.7"><stop offset="0" stop-color="#ff6a6a"/><stop offset="0.5" stop-color="#e00000"/><stop offset="1" stop-color="#900000"/></radialGradient><radialGradient id="wb" cx="0.4" cy="0.35" r="0.7"><stop offset="0" stop-color="#ffffe0"/><stop offset="0.6" stop-color="#e8e8e0"/><stop offset="1" stop-color="#a0a0a0"/></radialGradient></defs><ellipse cx="32" cy="119.5" rx="6.5" ry="3.2" fill="#555" opacity="0.85"/><path d="M13.5,122 L20.5,114.5 L23.5,117 L16.5,124.5 Z" fill="#d00000"/><circle cx="25.4" cy="110" r="7" fill="url(#rb)"/><polygon points="22,152 33,147 39,154 33,160 22,159" fill="#4a4a4a" opacity="0.85"/><path d="M12.5,137 L18,135.5 L20,139 L20,156 L15,154 Q12,152 12.5,148 Z" fill="#c00000"/><path d="M19.5,136 L26,136.5 L27,140 L27,158 L20,156 Z" fill="#e00808"/><path d="M26.5,137 L34,139 L34.5,142.5 L33,157 L27,158 Z" fill="#b00000"/><path d="M13,137.5 L18,136 M20,136.5 L26,137 M27,137.5 L34,139.5" stroke="#ff5050" stroke-width="1"/><path d="M19.8,139 L19.8,156 M27,140 L27,158" stroke="#700000" stroke-width="0.9"/><ellipse cx="31" cy="188.5" rx="6.5" ry="4" transform="rotate(-25 31 188.5)" fill="#5a5a5a" opacity="0.85"/><rect x="19.5" y="182" width="5" height="13.5" rx="1.5" fill="#e8e8e4"/><path d="M19.5,186h5M19.5,189h5M19.5,192h5" stroke="#b0b0b0" stroke-width="0.7"/><circle cx="22.7" cy="177.8" r="6" fill="url(#wb)"/><polygon points="25.3,216.2 39.3,222.2 32.3,230.2 21.3,230.2" fill="#6a6a6a" opacity="0.85"/><polygon points="11.2,210.7 21.3,214.3 23.5,230.3 11.9,225.2" fill="#d8d8d8"/><polygon points="21.3,214.3 35.1,210.0 33.6,224.5 23.5,230.3" fill="#b8b8b8"/><polygon points="11.2,210.7 24.2,207.1 35.1,210.0 21.3,214.3" fill="#f0f0f0"/><polygon points="25.3,252.8 39.3,258.8 32.3,266.8 21.3,266.8" fill="#6a6a6a" opacity="0.85"/><polygon points="11.2,247.3 21.3,250.9 23.5,266.9 11.9,261.8" fill="#3a6890"/><polygon points="21.3,250.9 35.1,246.6 33.6,261.1 23.5,266.9" fill="#3c9a40"/><polygon points="11.2,247.3 24.2,243.7 35.1,246.6 21.3,250.9" fill="#b86850"/><line x1="11.3" y1="250.2" x2="21.7" y2="254.1" stroke="#2a4060" stroke-width="0.8"/><line x1="21.7" y1="254.1" x2="34.8" y2="249.5" stroke="#2a4060" stroke-width="0.8"/><line x1="11.5" y1="253.1" x2="22.2" y2="257.3" stroke="#2a4060" stroke-width="0.8"/><line x1="22.2" y1="257.3" x2="34.5" y2="252.4" stroke="#2a4060" stroke-width="0.8"/><line x1="11.6" y1="256.0" x2="22.6" y2="260.5" stroke="#2a4060" stroke-width="0.8"/><line x1="22.6" y1="260.5" x2="34.2" y2="255.3" stroke="#2a4060" stroke-width="0.8"/><line x1="11.8" y1="258.9" x2="23.1" y2="263.7" stroke="#2a4060" stroke-width="0.8"/><line x1="23.1" y1="263.7" x2="33.9" y2="258.2" stroke="#2a4060" stroke-width="0.8"/><polygon points="25.3,284.9 39.3,290.9 32.3,298.9 21.3,298.9" fill="#6a6a6a" opacity="0.85"/><polygon points="11.2,279.4 21.3,283.0 23.5,299.0 11.9,293.9" fill="#984a34"/><polygon points="21.3,283.0 35.1,278.7 33.6,293.2 23.5,299.0" fill="#743628"/><polygon points="11.2,279.4 24.2,275.8 35.1,278.7 21.3,283.0" fill="#b86850"/><line x1="11.3" y1="282.3" x2="21.7" y2="286.2" stroke="#7a3020" stroke-width="0.8"/><line x1="21.7" y1="286.2" x2="34.8" y2="281.6" stroke="#7a3020" stroke-width="0.8"/><line x1="11.5" y1="285.2" x2="22.2" y2="289.4" stroke="#7a3020" stroke-width="0.8"/><line x1="22.2" y1="289.4" x2="34.5" y2="284.5" stroke="#7a3020" stroke-width="0.8"/><line x1="11.6" y1="288.1" x2="22.6" y2="292.6" stroke="#7a3020" stroke-width="0.8"/><line x1="22.6" y1="292.6" x2="34.2" y2="287.4" stroke="#7a3020" stroke-width="0.8"/><line x1="11.8" y1="291.0" x2="23.1" y2="295.8" stroke="#7a3020" stroke-width="0.8"/><line x1="23.1" y1="295.8" x2="33.9" y2="290.3" stroke="#7a3020" stroke-width="0.8"/><polygon points="25.3,318.0 39.3,324.0 32.3,332.0 21.3,332.0" fill="#6a6a6a" opacity="0.85"/><polygon points="11.2,312.5 21.3,316.1 23.5,332.1 11.9,327.0" fill="#984a34"/><polygon points="21.3,316.1 35.1,311.8 33.6,326.3 23.5,332.1" fill="#743628"/><polygon points="11.2,312.5 24.2,308.9 35.1,311.8 21.3,316.1" fill="#b86850"/><line x1="11.3" y1="315.4" x2="21.7" y2="319.3" stroke="#7a3020" stroke-width="0.8"/><line x1="21.7" y1="319.3" x2="34.8" y2="314.7" stroke="#7a3020" stroke-width="0.8"/><line x1="11.5" y1="318.3" x2="22.2" y2="322.5" stroke="#7a3020" stroke-width="0.8"/><line x1="22.2" y1="322.5" x2="34.5" y2="317.6" stroke="#7a3020" stroke-width="0.8"/><line x1="11.6" y1="321.2" x2="22.6" y2="325.7" stroke="#7a3020" stroke-width="0.8"/><line x1="22.6" y1="325.7" x2="34.2" y2="320.5" stroke="#7a3020" stroke-width="0.8"/><line x1="11.8" y1="324.1" x2="23.1" y2="328.9" stroke="#7a3020" stroke-width="0.8"/><line x1="23.1" y1="328.9" x2="33.9" y2="323.4" stroke="#7a3020" stroke-width="0.8"/><ellipse cx="27.8" cy="321.5" rx="5.8" ry="7" fill="#e01010"/><ellipse cx="28.3" cy="322" rx="3" ry="4" fill="none" stroke="#900" stroke-width="0.8"/><polygon points="25.3,351.5 39.3,357.5 32.3,365.5 21.3,365.5" fill="#6a6a6a" opacity="0.85"/><polygon points="11.2,346.0 21.3,349.6 23.5,365.6 11.9,360.5" fill="#984a34"/><polygon points="21.3,349.6 35.1,345.3 33.6,359.8 23.5,365.6" fill="#743628"/><polygon points="11.2,346.0 24.2,342.4 35.1,345.3 21.3,349.6" fill="#b86850"/><line x1="11.3" y1="348.9" x2="21.7" y2="352.8" stroke="#7a3020" stroke-width="0.8"/><line x1="21.7" y1="352.8" x2="34.8" y2="348.2" stroke="#7a3020" stroke-width="0.8"/><line x1="11.5" y1="351.8" x2="22.2" y2="356.0" stroke="#7a3020" stroke-width="0.8"/><line x1="22.2" y1="356.0" x2="34.5" y2="351.1" stroke="#7a3020" stroke-width="0.8"/><line x1="11.6" y1="354.7" x2="22.6" y2="359.2" stroke="#7a3020" stroke-width="0.8"/><line x1="22.6" y1="359.2" x2="34.2" y2="354.0" stroke="#7a3020" stroke-width="0.8"/><line x1="11.8" y1="357.6" x2="23.1" y2="362.4" stroke="#7a3020" stroke-width="0.8"/><line x1="23.1" y1="362.4" x2="33.9" y2="356.9" stroke="#7a3020" stroke-width="0.8"/><polygon points="14.3,346.3 24.2,343.8 31.8,345.5 21.3,348.3" fill="#40a030"/><polygon points="25.3,390.8 39.3,396.8 32.3,403.8 21.3,402.8" fill="#555" opacity="0.8"/><polygon points="11.3,382.8 26.3,379.8 23.3,402.8 12.3,396.8" fill="#a85a3a"/><polygon points="16.3,384.8 26.3,380.3 35.3,389.8 22.3,400.8" fill="#e8d868"/><line x1="9.5" y1="413.5" x2="20.5" y2="411" stroke="#707070" stroke-width="0.8"/><line x1="20.5" y1="411" x2="32.5" y2="413" stroke="#707070" stroke-width="0.8"/><line x1="32.5" y1="413" x2="21" y2="418.5" stroke="#707070" stroke-width="0.8"/><line x1="21" y1="418.5" x2="9.5" y2="413.5" stroke="#707070" stroke-width="0.8"/><line x1="9.5" y1="413.5" x2="14.5" y2="423.5" stroke="#707070" stroke-width="0.8"/><line x1="21" y1="418.5" x2="25.5" y2="420.5" stroke="#707070" stroke-width="0.8"/><line x1="32.5" y1="413" x2="32" y2="425.5" stroke="#707070" stroke-width="0.8"/><line x1="14.5" y1="423.5" x2="20.5" y2="432" stroke="#707070" stroke-width="0.8"/><line x1="25.5" y1="420.5" x2="20.5" y2="432" stroke="#707070" stroke-width="0.8"/><line x1="32" y1="425.5" x2="20.5" y2="432" stroke="#707070" stroke-width="0.8"/><line x1="14.5" y1="423.5" x2="25.5" y2="420.5" stroke="#707070" stroke-width="0.8"/><line x1="20.5" y1="411" x2="25.5" y2="420.5" stroke="#707070" stroke-width="0.8"/><line x1="25.5" y1="420.5" x2="32" y2="425.5" stroke="#707070" stroke-width="0.8"/><path d="M25,433 L38,428 M32,425.5 L38,428" stroke="#909090" stroke-width="0.7"/><circle cx="9.5" cy="413.5" r="1.6" fill="#e02020"/><circle cx="20.5" cy="411" r="1.6" fill="#e02020"/><circle cx="32.5" cy="413" r="1.6" fill="#e02020"/><circle cx="21" cy="418.5" r="1.6" fill="#e02020"/><circle cx="14.5" cy="423.5" r="1.6" fill="#e02020"/><circle cx="25.5" cy="420.5" r="1.6" fill="#e02020"/><circle cx="32" cy="425.5" r="1.6" fill="#e02020"/><circle cx="20.5" cy="432" r="1.6" fill="#e02020"/></svg>
</body></html>
